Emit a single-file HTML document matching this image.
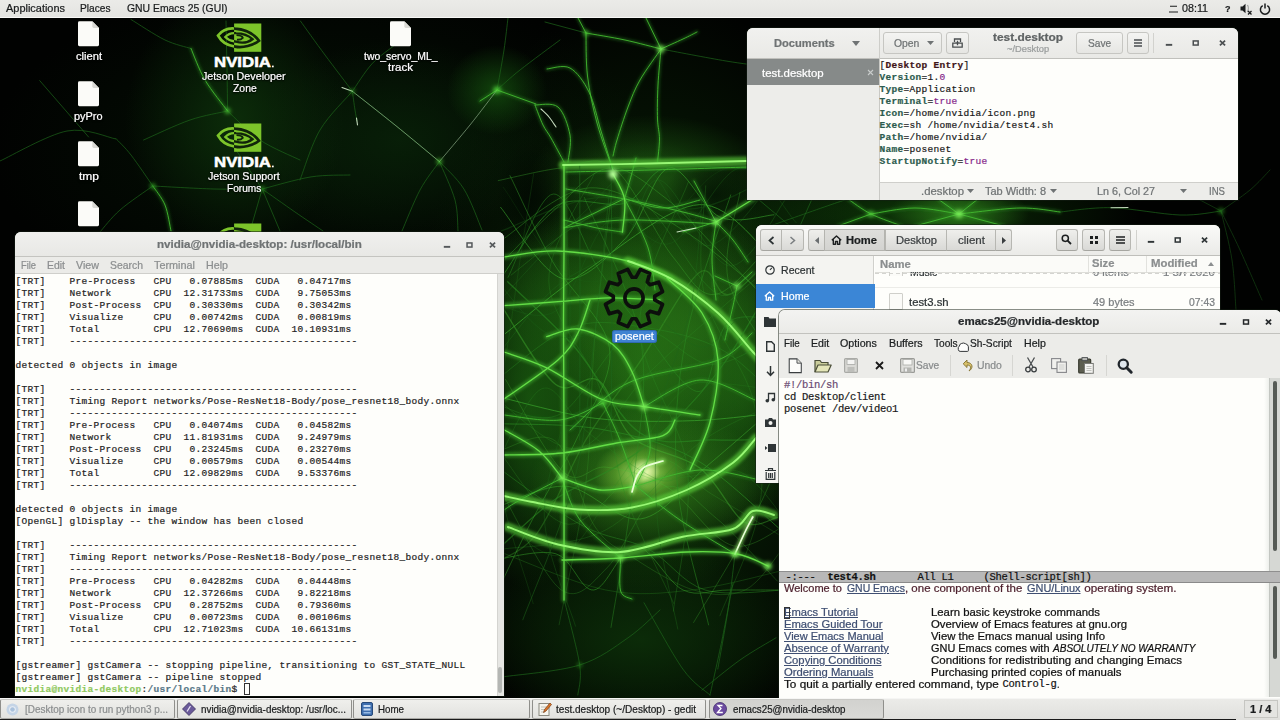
<!DOCTYPE html>
<html>
<head>
<meta charset="utf-8">
<title>desktop</title>
<style>
*{box-sizing:border-box;margin:0;padding:0}
html,body{width:1280px;height:720px;overflow:hidden;background:#000}
body{position:relative;font-family:"Liberation Sans",sans-serif;font-size:11px;color:#2e3436}
.abs{position:absolute}
.t{position:absolute;white-space:pre;transform-origin:0 50%;-webkit-text-stroke:.22px}
.mono{font-family:"Liberation Mono",monospace;font-size:9.5px;letter-spacing:0.299px;line-height:12px;white-space:pre;position:absolute;color:#1a1a1a;-webkit-text-stroke:.2px}
.mono b{font-weight:700}
svg{position:absolute;overflow:visible}
.mono.big{font-size:10.5px;letter-spacing:-0.301px}

</style>
</head>
<body>
<div class="abs" id="wall" style="left:0;top:0;width:1280px;height:720px;background:
radial-gradient(ellipse 50px 38px at 715px 195px, rgba(2,14,3,.75), rgba(2,14,3,0) 100%),
radial-gradient(ellipse 34px 60px at 530px 200px, rgba(1,8,2,.7), rgba(1,8,2,0) 100%),
radial-gradient(ellipse 15px 13px at 645px 471px, rgba(245,255,190,.95), rgba(220,250,140,0) 100%),
radial-gradient(ellipse 48px 34px at 642px 474px, rgba(200,245,120,.85), rgba(150,220,70,.35) 55%, rgba(120,200,60,0) 100%),
radial-gradient(ellipse 120px 70px at 650px 480px, rgba(70,160,36,.55), rgba(40,110,20,0) 100%),
radial-gradient(ellipse 110px 120px at 690px 330px, rgba(44,120,24,.55), rgba(30,90,16,0) 100%),
radial-gradient(ellipse 120px 60px at 650px 175px, rgba(40,120,24,.55), rgba(30,90,16,0) 100%),
radial-gradient(ellipse 70px 190px at 530px 400px, rgba(26,92,16,.75), rgba(20,70,12,0) 100%),
radial-gradient(ellipse 70px 150px at 745px 380px, rgba(30,100,18,.6), rgba(20,70,12,0) 100%),
radial-gradient(ellipse 130px 90px at 600px 300px, rgba(40,120,22,.5), rgba(30,90,16,0) 100%),
radial-gradient(ellipse 160px 230px at 645px 370px, rgba(34,104,18,.95), rgba(24,80,12,.6) 55%, rgba(14,50,8,0) 100%),
radial-gradient(ellipse 170px 90px at 640px 640px, rgba(12,46,9,.9), rgba(6,24,4,0) 100%),
radial-gradient(ellipse 240px 400px at 650px 390px, rgba(12,48,8,.95), rgba(6,24,4,0) 100%),
radial-gradient(ellipse 70px 30px at 959px 214px, rgba(50,140,30,.8), rgba(20,70,10,0) 100%),
radial-gradient(ellipse 240px 60px at 900px 214px, rgba(14,56,8,.9), rgba(8,30,4,0) 100%),
radial-gradient(ellipse 50px 45px at 497px 90px, rgba(20,80,14,.8), rgba(0,0,0,0) 100%),
radial-gradient(ellipse 110px 130px at 235px 120px, rgba(12,46,10,.95), rgba(0,0,0,0) 100%),
radial-gradient(ellipse 150px 100px at 400px 140px, rgba(8,32,8,.9), rgba(0,0,0,0) 100%),
radial-gradient(ellipse 330px 170px at 320px 150px, rgba(5,20,5,.9), rgba(0,0,0,0) 100%),
#010201"></div>
<svg width="1280" height="720" style="left:0;top:0" viewBox="0 0 1280 720"><defs><filter id="gl" x="-10%" y="-10%" width="120%" height="120%"><feGaussianBlur stdDeviation="1.600"/></filter><filter id="gn" x="-100%" y="-100%" width="300%" height="300%"><feGaussianBlur stdDeviation="2.200"/></filter></defs>
<g fill="none" stroke-linecap="round" stroke-linejoin="round">
<g filter="url(#gl)">
<path d="M646.0 18.0L661.0 49.0M661.0 49.0C664.7 47.3 677.0 41.8 683.0 39.0C689.0 36.2 694.7 33.2 697.0 32.0M586.0 33.0C592.5 34.2 612.5 37.3 625.0 40.0C637.5 42.7 655.0 47.5 661.0 49.0M661.0 49.0C660.5 55.0 658.6 73.3 658.0 85.0C657.4 96.7 657.2 110.0 657.5 119.0C657.8 128.0 659.5 131.8 659.5 139.0C659.5 146.2 657.8 158.2 657.5 162.0M661.0 49.0C657.5 54.2 645.5 70.3 640.0 80.0C634.5 89.7 631.8 97.0 628.0 107.0C624.2 117.0 619.5 131.8 617.0 140.0C614.5 148.2 613.7 153.3 613.0 156.0M578.0 18.0L586.0 33.0M586.0 33.0C586.2 40.2 585.7 61.0 587.5 76.0C589.3 91.0 592.8 107.3 597.0 123.0C601.2 138.7 610.3 162.2 613.0 170.0M547.0 69.0C550.8 68.8 563.0 64.2 570.0 68.0C577.0 71.8 583.8 81.5 589.0 92.0C594.2 102.5 597.0 118.0 601.0 131.0C605.0 144.0 611.0 163.5 613.0 170.0M535.0 105.0C536.3 108.3 540.3 119.5 543.0 125.0C545.7 130.5 547.5 131.8 551.0 138.0C554.5 144.2 561.8 158.0 564.0 162.0M535.0 105.0C538.8 105.3 552.2 102.0 558.0 107.0C563.8 112.0 568.3 125.8 570.0 135.0C571.7 144.2 568.3 157.5 568.0 162.0M480.0 101.0L497.0 90.0M497.0 90.0L536.0 104.0M566.0 172.0C580.0 171.7 619.7 170.8 650.0 170.0C680.3 169.2 731.7 167.5 748.0 167.0M636.0 158.0C635.0 161.7 631.9 173.2 630.0 180.0C628.1 186.8 625.4 195.8 624.5 199.0M566.0 189.0C575.8 190.7 605.0 195.2 624.5 199.0C644.0 202.8 667.4 208.2 683.0 212.0C698.6 215.8 712.2 220.3 718.0 222.0M564.0 220.0C569.5 221.3 587.2 226.0 597.0 228.0C606.8 230.0 618.2 231.3 622.5 232.0M716.0 222.0L683.0 232.0M716.0 222.0C718.8 225.0 727.7 233.3 733.0 240.0C738.3 246.7 745.5 258.3 748.0 262.0M694.0 181.0L716.0 222.0M716.0 222.0C715.3 228.2 712.0 246.0 712.0 259.0C712.0 272.0 715.3 293.2 716.0 300.0M752.0 272.0L737.0 286.0M737.0 286.0C736.3 289.3 735.0 297.0 733.0 306.0C731.0 315.0 726.3 334.3 725.0 340.0M715.0 276.0L737.0 286.0M564.0 227.8L624.5 198.6M624.5 198.6C630.9 200.2 650.4 207.8 663.0 208.0C675.6 208.2 693.8 201.3 700.0 200.0M624.5 198.6C628.4 206.7 642.7 231.8 647.8 247.0C652.9 262.2 653.8 282.8 655.0 290.0M564.0 227.8C574.1 226.5 598.9 220.6 624.5 220.0C650.1 219.4 702.2 223.3 717.8 224.0M570.0 430.0C579.7 422.2 603.3 394.7 628.0 383.0C652.7 371.3 697.3 368.3 718.0 360.0C738.7 351.7 746.3 337.5 752.0 333.0M603.0 403.0C595.8 405.8 576.5 418.0 560.0 420.0C543.5 422.0 513.3 415.8 504.0 415.0M603.0 403.0C605.8 409.2 614.5 426.2 620.0 440.0C625.5 453.8 633.3 478.3 636.0 486.0M644.0 406.7C653.3 402.2 681.5 381.1 700.0 380.0C718.5 378.9 745.8 396.7 755.0 400.0M644.0 406.7C645.0 413.9 651.3 436.8 650.0 450.0C648.7 463.2 638.3 480.0 636.0 486.0M620.6 558.0C620.6 563.5 618.7 584.2 620.6 591.0C622.5 597.8 630.1 597.7 632.0 599.0M562.0 478.0C565.0 485.0 570.2 506.7 580.0 520.0C589.8 533.3 613.8 551.7 620.6 558.0M636.0 486.0C643.3 491.7 663.5 508.7 680.0 520.0C696.5 531.3 725.8 548.3 735.0 554.0M636.0 486.0C646.7 483.3 679.3 471.0 700.0 470.0C720.7 469.0 750.0 478.3 760.0 480.0M562.0 478.0C555.0 481.7 529.7 494.7 520.0 500.0C510.3 505.3 506.7 508.3 504.0 510.0M191.0 48.5C193.3 53.8 198.9 69.6 205.0 80.0C211.1 90.4 223.8 105.8 227.6 111.0M152.8 186.0C154.8 189.2 162.0 197.5 165.0 205.0C168.0 212.5 170.0 226.7 171.0 231.0M915.0 226.0L959.0 214.0M959.0 214.0L978.0 199.0M938.0 199.0L959.0 214.0M959.0 214.0L1004.0 226.0M959.0 214.0C969.2 213.0 1003.2 208.3 1020.0 208.0C1036.8 207.7 1053.3 211.3 1060.0 212.0M848.0 199.0C851.8 201.5 862.0 209.5 871.0 214.0C880.0 218.5 896.8 224.0 902.0 226.0M871.0 214.0L838.0 226.0M871.0 214.0C878.3 213.0 900.3 208.0 915.0 208.0C929.7 208.0 951.7 213.0 959.0 214.0" stroke="#2f9a22" stroke-width="3.5" opacity="0.38"/>
<path d="M564.0 165.0C564.0 179.2 564.1 224.0 564.0 250.0C563.9 276.0 563.5 289.3 563.5 321.0C563.5 352.7 563.9 393.5 564.0 440.0C564.1 486.5 564.0 573.3 564.0 600.0M613.0 174.0C614.9 178.2 622.9 189.3 624.5 199.0C626.1 208.7 622.8 226.5 622.5 232.0M755.0 198.0L716.0 222.0M504.0 257.0C513.0 256.0 537.3 250.3 558.0 251.0C578.7 251.7 609.2 256.4 628.0 261.0C646.8 265.6 663.8 275.7 671.0 278.6M504.0 305.6C513.0 305.0 540.5 303.0 558.0 301.7C575.5 300.4 592.0 298.1 609.0 297.8C626.0 297.5 651.5 299.6 660.0 300.0M546.7 336.7C551.9 335.4 566.8 327.7 577.8 329.0C588.8 330.3 603.8 337.4 612.8 344.5C621.8 351.6 626.8 361.3 632.0 371.7C637.2 382.1 642.0 400.9 644.0 406.7M504.0 352.0C511.1 354.6 530.5 360.0 546.7 367.8C562.9 375.6 584.8 392.5 601.0 399.0C617.2 405.5 627.5 404.0 644.0 406.7C660.5 409.4 690.7 413.6 700.0 415.0M667.0 278.0C672.8 283.8 693.5 299.3 702.0 313.0C710.5 326.7 716.7 341.8 718.0 360.0C719.3 378.2 714.7 403.7 710.0 422.0C705.3 440.3 693.3 462.0 690.0 470.0M504.0 399.0C513.0 392.5 545.7 371.0 558.0 360.0C570.3 349.0 572.7 343.0 578.0 333.0C583.3 323.0 588.0 305.5 590.0 300.0M504.0 429.7C509.8 433.2 529.3 442.9 539.0 451.0C548.7 459.1 558.2 473.5 562.0 478.0M504.0 455.0C513.7 454.7 543.2 455.0 562.0 453.0C580.8 451.0 599.9 445.9 616.7 443.0C633.5 440.1 653.3 439.4 663.0 435.6C672.7 431.8 673.0 422.6 675.0 420.0M562.0 560.0C571.8 559.7 599.8 559.3 620.6 558.0C641.4 556.7 667.3 552.7 686.7 552.0C706.1 551.3 723.5 551.7 737.0 554.0C750.5 556.3 762.8 564.0 768.0 566.0M562.0 478.0C568.3 480.0 587.7 488.7 600.0 490.0C612.3 491.3 630.0 486.7 636.0 486.0" stroke="#46c032" stroke-width="5" opacity="0.5"/>
<path d="M563.0 165.0C577.5 164.8 619.5 164.2 650.0 163.5C680.5 162.8 730.0 161.4 746.0 161.0M628.0 261.0C635.2 263.9 656.0 269.9 671.0 278.6C686.0 287.3 704.3 300.8 718.0 313.0C731.7 325.2 743.0 340.8 753.0 352.0C763.0 363.2 773.8 375.3 778.0 380.0M504.0 496.0C508.5 496.9 518.7 499.4 531.0 501.7C543.3 503.9 561.2 508.5 578.0 509.5C594.8 510.5 613.9 510.8 632.0 507.5C650.1 504.2 669.9 497.4 686.7 490.0C703.5 482.6 721.5 471.5 733.0 462.8C744.5 454.1 752.2 442.1 756.0 438.0M507.8 527.0C516.2 529.9 539.2 540.3 558.0 544.5C576.8 548.7 599.8 553.3 620.6 552.0C641.4 550.7 664.1 540.5 682.8 536.7C701.5 532.9 721.3 533.3 733.0 529.0C744.7 524.7 746.0 513.3 752.8 511.0C759.6 508.7 770.5 514.3 774.0 515.0" stroke="#5fdc3c" stroke-width="9" opacity="0.6"/>
<path d="M735.0 554.0C736.7 550.3 742.0 538.2 745.0 532.0C748.0 525.8 751.5 519.5 752.8 517.0M632.0 492.0C632.8 489.3 634.8 480.2 637.0 476.0C639.2 471.8 640.7 469.2 645.0 466.7C649.3 464.2 660.0 461.9 663.0 461.0" stroke="#9cf070" stroke-width="5" opacity="0.6"/>
</g>
<path d="M497.5 302.9C511.1 288.6 554.5 239.6 579.0 217.1C603.5 194.6 623.2 163.2 644.5 168.0C665.8 172.8 683.8 245.8 706.9 245.8C730.0 245.8 770.3 181.0 783.0 168.0" stroke="#1d641a" stroke-width="0.8" opacity="0.48"/>
<path d="M501.9 549.2C519.3 546.0 573.6 547.2 606.4 529.6C639.2 512.0 670.3 464.5 698.6 443.5C726.9 422.4 763.5 410.2 776.5 403.5" stroke="#2a8a22" stroke-width="0.8" opacity="0.37"/>
<path d="M496.9 404.7C507.6 406.2 537.7 426.2 560.8 413.8C583.8 401.4 610.2 338.4 635.4 330.1C660.7 321.9 686.7 364.6 712.0 364.4C737.3 364.2 774.5 335.0 787.1 329.1" stroke="#2a8a22" stroke-width="1" opacity="0.36"/>
<path d="M500.6 207.3C510.9 219.2 541.7 273.4 562.5 278.6C583.3 283.8 607.8 256.8 625.5 238.3C643.3 219.9 653.3 171.6 669.0 168.0C684.7 164.4 702.2 209.1 719.6 216.9C737.1 224.7 764.9 215.1 773.9 214.8" stroke="#3aa82c" stroke-width="1" opacity="0.59"/>
<path d="M501.9 449.6C510.9 448.3 540.2 428.6 555.7 441.3C571.1 454.0 581.7 506.5 594.4 525.8C607.1 545.1 615.4 546.3 632.0 557.0C648.5 567.7 674.7 584.5 693.5 590.0C712.4 595.5 730.4 596.8 745.2 590.0C760.0 583.2 776.1 555.9 782.3 549.1" stroke="#4ac035" stroke-width="1" opacity="0.23"/>
<path d="M499.8 241.4C514.9 232.5 558.6 189.2 589.9 187.8C621.2 186.5 655.0 212.4 687.5 233.1C720.1 253.9 768.7 299.1 784.9 312.3" stroke="#3aa82c" stroke-width="1" opacity="0.41"/>
<path d="M505.0 498.6C514.4 513.8 544.3 578.6 561.4 590.0C578.5 601.4 590.7 584.3 607.5 567.3C624.4 550.3 644.5 496.2 662.6 488.1C680.8 479.9 697.2 502.7 716.3 518.2C735.4 533.7 767.2 570.6 777.4 581.1" stroke="#3aa82c" stroke-width="1" opacity="0.29"/>
<path d="M499.0 551.5C516.8 557.9 573.8 583.6 605.8 590.0C637.9 596.4 662.0 593.2 691.4 590.0C720.9 586.8 767.3 573.9 782.5 570.6" stroke="#2a8a22" stroke-width="0.8" opacity="0.41"/>
<path d="M491.9 563.9C499.4 558.9 521.0 554.4 536.8 533.6C552.6 512.7 569.6 467.0 586.6 438.6C603.7 410.2 620.5 390.5 639.2 362.9C658.0 335.2 684.0 284.1 699.0 272.7C714.0 261.3 715.3 298.6 729.1 294.4C742.8 290.2 772.6 255.2 781.3 247.3" stroke="#4ac035" stroke-width="1.3" opacity="0.28"/>
<path d="M490.1 364.8C500.6 352.2 531.3 309.2 553.2 289.2C575.2 269.1 604.2 262.6 621.9 244.5C639.6 226.3 641.8 176.6 659.6 180.1C677.4 183.7 707.6 262.7 728.7 265.8C749.8 268.9 776.5 209.9 786.0 198.7" stroke="#1d641a" stroke-width="1" opacity="0.47"/>
<path d="M496.5 379.8C509.2 371.0 547.4 335.8 572.2 327.1C597.1 318.4 621.0 323.9 645.8 327.6C670.5 331.3 698.7 337.4 720.7 349.1C742.7 360.9 768.2 390.0 777.7 398.2" stroke="#2a8a22" stroke-width="1" opacity="0.41"/>
<path d="M505.5 379.5C515.3 395.0 547.1 457.9 564.0 472.5C580.8 487.1 589.4 464.8 606.6 467.2C623.9 469.7 646.1 474.1 667.3 487.2C688.4 500.3 711.8 540.8 733.4 545.8C754.9 550.8 785.9 522.0 796.4 517.2" stroke="#4ac035" stroke-width="1" opacity="0.27"/>
<path d="M503.0 308.4C511.8 321.1 539.7 372.4 555.7 384.5C571.6 396.5 585.9 371.7 598.7 380.6C611.5 389.4 615.7 422.9 632.5 437.5C649.4 452.1 681.3 454.0 699.8 468.0C718.3 482.0 730.6 513.4 743.5 521.6C756.4 529.9 771.7 518.2 777.3 517.5" stroke="#4ac035" stroke-width="1.3" opacity="0.38"/>
<path d="M505.4 333.5C518.8 323.1 553.7 292.3 586.0 270.8C618.4 249.4 668.0 205.9 699.7 204.6C731.5 203.2 763.7 253.1 776.5 262.8" stroke="#3aa82c" stroke-width="1" opacity="0.69"/>
<path d="M488.5 391.7C503.2 401.2 550.0 451.7 576.7 448.6C603.3 445.5 623.7 397.1 648.5 373.1C673.3 349.1 701.2 325.7 725.4 304.6C749.7 283.5 782.5 256.3 794.0 246.6" stroke="#2a8a22" stroke-width="1" opacity="0.32"/>
<path d="M508.0 277.4C515.6 263.5 538.1 195.3 553.3 194.0C568.4 192.7 584.0 247.0 598.9 269.6C613.8 292.2 626.2 309.1 642.9 329.4C659.6 349.8 684.7 392.9 699.1 391.6C713.4 390.3 713.3 332.8 729.1 321.4C745.0 310.1 783.1 323.1 793.9 323.4" stroke="#2a8a22" stroke-width="1" opacity="0.51"/>
<path d="M501.4 230.9C517.0 225.4 562.9 201.6 595.4 197.9C628.0 194.1 665.0 213.4 696.8 208.4C728.7 203.4 771.5 174.7 786.4 168.0" stroke="#1d641a" stroke-width="1.3" opacity="0.35"/>
<path d="M498.6 396.9C514.7 400.4 562.5 414.3 595.1 418.3C627.8 422.2 662.8 421.7 694.6 420.6C726.4 419.5 770.6 413.0 785.8 411.5" stroke="#3aa82c" stroke-width="1" opacity="0.67"/>
<path d="M498.0 506.8C509.5 503.4 543.0 484.3 566.8 486.3C590.6 488.4 617.1 522.5 640.8 518.9C664.5 515.2 683.9 485.3 709.0 464.3C734.2 443.2 777.9 404.5 791.6 392.5" stroke="#3aa82c" stroke-width="1" opacity="0.53"/>
<path d="M511.2 275.0C523.0 266.1 560.3 233.8 582.1 221.7C603.9 209.6 618.9 190.1 642.2 202.4C665.5 214.7 698.2 290.7 721.7 295.4C745.3 300.2 773.1 241.8 783.4 231.1" stroke="#2a8a22" stroke-width="1" opacity="0.38"/>
<path d="M488.5 300.8C499.7 302.5 535.3 324.6 555.6 311.1C575.8 297.5 590.7 230.9 610.0 219.5C629.2 208.2 649.7 251.7 671.3 243.1C692.9 234.5 718.8 171.4 739.6 168.0C760.5 164.6 786.9 213.7 796.3 222.8" stroke="#1d641a" stroke-width="1" opacity="0.35"/>
<path d="M507.7 281.8C519.0 292.9 553.4 323.1 575.5 348.2C597.6 373.4 617.1 417.7 640.2 433.0C663.3 448.3 690.7 439.0 714.1 439.9C737.5 440.9 769.7 439.1 780.8 438.9" stroke="#2a8a22" stroke-width="1.3" opacity="0.60"/>
<path d="M510.5 528.6C519.5 532.9 545.6 563.1 564.2 554.2C582.9 545.3 603.3 502.0 622.5 475.1C641.8 448.2 662.8 407.9 679.7 392.8C696.6 377.6 704.9 383.8 724.1 384.0C743.4 384.2 783.4 392.4 795.2 394.0" stroke="#2a8a22" stroke-width="0.8" opacity="0.28"/>
<path d="M489.2 557.8C499.8 548.4 530.7 516.8 552.5 501.2C574.3 485.6 600.5 477.0 620.2 464.1C640.0 451.3 653.7 441.1 671.0 424.2C688.4 407.4 706.3 388.5 724.3 363.0C742.3 337.6 769.9 286.7 779.0 271.5" stroke="#2a8a22" stroke-width="1.3" opacity="0.57"/>
<path d="M490.6 272.0C499.8 282.1 527.1 322.7 545.9 332.6C564.6 342.6 586.9 335.2 603.0 331.7C619.2 328.1 626.2 308.8 642.7 311.4C659.1 313.9 684.4 346.1 701.6 347.0C718.7 348.0 731.0 315.6 745.5 317.2C759.9 318.7 781.1 349.9 788.3 356.4" stroke="#1d641a" stroke-width="1" opacity="0.39"/>
<path d="M498.3 180.6C508.8 178.5 541.7 170.1 561.0 168.0C580.3 165.9 595.4 153.1 614.1 168.0C632.9 182.9 656.2 236.5 673.4 257.5C690.5 278.5 699.4 297.9 717.1 294.1C734.8 290.2 769.1 244.3 779.5 234.3" stroke="#3aa82c" stroke-width="1" opacity="0.39"/>
<path d="M493.2 271.6C503.2 261.5 533.8 228.6 553.0 211.3C572.3 194.1 590.0 170.3 608.7 168.0C627.3 165.7 646.7 184.0 665.0 197.6C683.2 211.3 699.6 231.3 718.2 250.1C736.8 268.9 766.7 300.3 776.5 310.4" stroke="#3aa82c" stroke-width="1" opacity="0.41"/>
<path d="M502.1 423.7C518.5 424.6 568.8 423.4 601.0 429.3C633.2 435.2 665.0 442.2 695.2 459.2C725.4 476.2 767.8 519.2 782.3 531.2" stroke="#2a8a22" stroke-width="1" opacity="0.69"/>
<path d="M489.1 461.0C504.3 471.7 554.1 510.1 580.7 524.7C607.2 539.4 627.4 538.1 648.1 548.9C668.9 559.8 682.3 583.2 705.1 590.0C727.9 596.8 771.8 590.0 785.1 590.0" stroke="#2a8a22" stroke-width="0.8" opacity="0.61"/>
<path d="M503.3 187.3C514.1 201.9 546.9 261.6 568.3 274.6C589.7 287.6 607.3 282.2 631.7 265.4C656.1 248.6 689.9 190.2 714.5 174.0C739.1 157.7 768.5 169.0 779.3 168.0" stroke="#1d641a" stroke-width="0.8" opacity="0.25"/>
<path d="M494.1 469.6C502.0 456.1 526.2 394.9 541.9 388.7C557.5 382.5 569.3 417.4 587.9 432.3C606.6 447.1 637.4 470.4 653.9 477.8C670.5 485.3 672.5 477.6 687.2 476.7C701.8 475.8 725.1 464.9 741.9 472.7C758.7 480.5 780.2 515.0 787.8 523.4" stroke="#2a8a22" stroke-width="1" opacity="0.26"/>
<path d="M502.9 275.3C511.9 263.7 536.2 217.7 556.6 205.7C577.0 193.6 607.4 209.2 625.3 203.0C643.3 196.7 646.3 173.8 664.2 168.0C682.2 162.2 713.0 168.0 733.0 168.0C753.0 168.0 775.7 168.0 784.2 168.0" stroke="#2a8a22" stroke-width="1" opacity="0.70"/>
<path d="M488.4 561.4C499.5 560.1 537.6 548.8 555.2 553.6C572.7 558.3 580.4 591.3 593.8 590.0C607.2 588.7 620.7 546.0 635.5 546.0C650.4 546.0 667.5 582.7 683.1 590.0C698.6 597.3 710.1 590.0 728.9 590.0C747.7 590.0 784.7 590.0 795.9 590.0" stroke="#3aa82c" stroke-width="0.8" opacity="0.61"/>
<path d="M499.9 452.8C511.4 464.7 543.1 523.2 568.7 524.3C594.3 525.4 629.5 464.6 653.3 459.5C677.1 454.5 689.9 481.1 711.5 494.0C733.1 507.0 771.1 530.0 783.0 537.2" stroke="#3aa82c" stroke-width="0.8" opacity="0.28"/>
<path d="M594.4 173.5C586.8 191.4 547.9 245.2 548.8 281.0C549.7 316.9 587.2 352.7 600.0 388.5C612.7 424.4 613.2 460.2 625.5 496.0C637.8 531.9 665.7 585.6 673.7 603.5" stroke="#2a8a22" stroke-width="1" opacity="0.33"/>
<path d="M611.4 194.8C608.7 218.7 599.0 290.4 594.7 338.1C590.5 385.9 592.0 433.7 586.1 481.5C580.2 529.2 563.6 600.9 559.1 624.8" stroke="#3aa82c" stroke-width="1" opacity="0.24"/>
<path d="M584.3 197.4C593.7 221.3 632.6 293.0 640.8 340.8C648.9 388.5 638.1 436.3 633.1 484.1C628.2 531.9 614.7 603.5 611.0 627.4" stroke="#2a8a22" stroke-width="1" opacity="0.47"/>
<path d="M739.9 192.5C737.9 206.8 722.4 249.8 727.9 278.5C733.4 307.1 764.4 335.8 773.0 364.5C781.6 393.1 784.3 421.8 779.5 450.5C774.7 479.1 758.2 507.8 743.9 536.5C729.6 565.1 702.0 608.1 693.6 622.5" stroke="#3aa82c" stroke-width="1" opacity="0.34"/>
<path d="M705.7 185.8C705.4 203.7 696.0 257.4 704.0 293.3C711.9 329.1 744.2 364.9 753.4 400.8C762.6 436.6 765.0 472.4 759.4 508.3C753.8 544.1 726.5 597.9 719.9 615.8" stroke="#2a8a22" stroke-width="1" opacity="0.30"/>
<path d="M702.1 199.1C700.3 217.0 698.0 270.7 690.9 306.6C683.8 342.4 665.1 378.2 659.5 414.1C654.0 449.9 654.5 485.7 657.5 521.6C660.6 557.4 674.4 611.1 677.8 629.1" stroke="#1d641a" stroke-width="1" opacity="0.43"/>
<path d="M564.0 196.2C565.1 214.2 570.0 267.9 570.1 303.7C570.2 339.6 568.7 375.4 564.5 411.2C560.2 447.1 542.6 482.9 544.4 518.7C546.2 554.6 570.3 608.3 575.5 626.2" stroke="#1d641a" stroke-width="1" opacity="0.39"/>
<path d="M533.6 173.7C530.0 197.6 518.1 269.2 511.9 317.0C505.7 364.8 492.5 412.6 496.1 460.3C499.7 508.1 527.0 579.8 533.2 603.7" stroke="#2a8a22" stroke-width="1" opacity="0.21"/>
<path d="M609.5 189.8C607.1 213.7 600.5 285.4 594.8 333.2C589.1 380.9 587.3 428.7 575.3 476.5C563.4 524.3 531.6 595.9 522.8 619.8" stroke="#1d641a" stroke-width="1" opacity="0.54"/>
<path d="M688.6 181.2C680.4 205.1 639.9 276.7 639.7 324.5C639.5 372.3 681.7 420.1 687.3 467.8C692.9 515.6 675.7 587.3 673.4 611.2" stroke="#2a8a22" stroke-width="1" opacity="0.35"/>
<path d="M730.7 194.9C723.2 218.8 694.9 290.5 685.9 338.2C677.0 386.0 673.2 433.8 677.0 481.6C680.7 529.4 703.3 601.0 708.6 624.9" stroke="#2a8a22" stroke-width="1" opacity="0.54"/>
<path d="M510.0 175.7C517.2 190.0 536.1 233.0 552.7 261.7C569.3 290.3 605.0 319.0 609.4 347.7C613.8 376.3 592.0 405.0 579.2 433.7C566.3 462.3 547.0 491.0 532.3 519.7C517.5 548.3 497.7 591.3 490.8 605.7" stroke="#3aa82c" stroke-width="1" opacity="0.44"/>
<path d="M661.0 49.0C671.8 51.0 709.2 58.2 726.0 61.0C742.8 63.8 756.0 65.2 762.0 66.0M545.0 22.0L586.0 33.0M497.0 90.0C498.2 83.3 502.2 62.0 504.0 50.0C505.8 38.0 507.3 23.3 508.0 18.0M497.0 90.0C500.8 86.7 509.5 78.3 520.0 70.0C530.5 61.7 553.3 45.0 560.0 40.0M579.7 165.0C579.8 187.5 580.0 254.2 580.0 300.0C580.0 345.8 579.8 416.7 579.7 440.0M611.0 165.0C611.2 187.5 612.0 254.2 612.0 300.0C612.0 345.8 611.2 416.7 611.0 440.0M735.0 554.0C733.8 563.3 730.9 590.8 728.0 610.0C725.1 629.2 719.5 659.2 717.8 669.0M564.0 599.0C566.6 610.0 577.4 649.0 579.7 665.0C582.0 681.0 578.1 690.0 577.8 695.0M504.0 676.7C516.6 674.8 559.0 671.5 579.7 665.0C600.4 658.5 614.6 647.0 628.0 637.8C641.4 628.6 654.7 614.6 660.0 610.0M644.0 602.8C650.5 613.8 671.8 653.6 682.8 669.0C693.8 684.4 705.5 690.7 710.0 695.0M710.0 695.0C712.0 685.8 718.2 658.7 722.0 640.0C725.8 621.3 731.2 592.5 733.0 583.0M776.0 637.8C770.0 641.5 752.3 651.3 740.0 660.0C727.7 668.7 708.3 685.0 702.0 690.0M131.0 19.5C136.7 22.9 155.0 35.2 165.0 40.0C175.0 44.8 186.7 47.1 191.0 48.5M226.0 21.0C226.2 29.2 226.7 55.0 227.0 70.0C227.3 85.0 227.5 104.2 227.6 111.0M227.6 111.0C233.0 115.8 247.9 131.8 260.0 140.0C272.1 148.2 293.3 156.7 300.0 160.0M143.6 140.0C151.3 136.7 176.0 124.8 190.0 120.0C204.0 115.2 221.3 112.5 227.6 111.0M116.0 138.7C118.5 141.4 124.9 147.1 131.0 155.0C137.1 162.9 149.2 180.8 152.8 186.0M152.8 186.0C163.0 186.5 195.8 188.5 214.0 189.0C232.2 189.5 254.0 189.0 262.0 189.0M0.0 161.0C11.2 156.0 47.7 134.7 67.0 131.0C86.3 127.3 107.8 137.7 116.0 139.0M39.7 80.6L88.6 137.0M152.8 186.0C147.3 190.0 128.8 202.3 120.0 210.0C111.2 217.7 103.3 228.3 100.0 232.0M300.4 21.0C304.5 26.7 316.3 43.3 325.0 55.0C333.7 66.7 347.8 85.2 352.4 91.3M352.4 91.3C352.8 94.4 354.2 105.0 355.0 110.0C355.8 115.0 356.7 119.2 357.0 121.0M352.4 91.3C359.5 96.9 380.5 113.3 395.0 125.0C409.5 136.7 432.0 155.5 439.4 161.6M352.4 91.3C355.7 86.7 364.9 71.5 372.0 63.8C379.1 56.1 391.2 48.1 395.0 45.0M352.4 91.3C347.0 97.8 328.7 115.2 320.0 130.0C311.3 144.8 303.3 171.7 300.0 180.0M439.4 161.6C443.5 166.2 456.8 177.6 463.9 189.0C471.0 200.4 479.0 223.2 482.0 230.0M402.0 231.0C405.0 224.2 413.8 201.6 420.0 190.0C426.2 178.4 436.2 166.3 439.4 161.6M439.4 161.6C442.0 168.0 451.9 188.4 455.0 200.0C458.1 211.6 457.5 225.8 458.0 231.0M262.2 189.0C270.3 187.0 296.4 179.2 311.0 176.9C325.6 174.6 343.5 175.3 350.0 175.0M262.2 189.0C267.7 192.8 284.9 205.0 295.0 212.0C305.1 219.0 318.3 227.8 323.0 231.0M262.2 189.0L280.0 231.0M262.2 189.0L250.0 231.0M236.0 150.0L262.2 189.0M758.0 199.0L790.0 226.0M800.0 226.0L812.0 199.0M770.0 226.0C780.0 222.5 817.0 209.5 830.0 205.0C843.0 200.5 845.0 200.0 848.0 199.0M1060.0 212.0C1068.5 211.3 1091.0 207.2 1111.0 207.7C1131.0 208.2 1161.7 214.4 1180.0 215.0C1198.3 215.6 1214.2 211.7 1221.0 211.0" stroke="#1d641a" stroke-width="1.0" opacity="0.7"/>
<path d="M646.0 18.0L661.0 49.0M661.0 49.0C664.7 47.3 677.0 41.8 683.0 39.0C689.0 36.2 694.7 33.2 697.0 32.0M586.0 33.0C592.5 34.2 612.5 37.3 625.0 40.0C637.5 42.7 655.0 47.5 661.0 49.0M661.0 49.0C660.5 55.0 658.6 73.3 658.0 85.0C657.4 96.7 657.2 110.0 657.5 119.0C657.8 128.0 659.5 131.8 659.5 139.0C659.5 146.2 657.8 158.2 657.5 162.0M661.0 49.0C657.5 54.2 645.5 70.3 640.0 80.0C634.5 89.7 631.8 97.0 628.0 107.0C624.2 117.0 619.5 131.8 617.0 140.0C614.5 148.2 613.7 153.3 613.0 156.0M578.0 18.0L586.0 33.0M586.0 33.0C586.2 40.2 585.7 61.0 587.5 76.0C589.3 91.0 592.8 107.3 597.0 123.0C601.2 138.7 610.3 162.2 613.0 170.0M547.0 69.0C550.8 68.8 563.0 64.2 570.0 68.0C577.0 71.8 583.8 81.5 589.0 92.0C594.2 102.5 597.0 118.0 601.0 131.0C605.0 144.0 611.0 163.5 613.0 170.0M535.0 105.0C536.3 108.3 540.3 119.5 543.0 125.0C545.7 130.5 547.5 131.8 551.0 138.0C554.5 144.2 561.8 158.0 564.0 162.0M535.0 105.0C538.8 105.3 552.2 102.0 558.0 107.0C563.8 112.0 568.3 125.8 570.0 135.0C571.7 144.2 568.3 157.5 568.0 162.0M480.0 101.0L497.0 90.0M497.0 90.0L536.0 104.0M566.0 172.0C580.0 171.7 619.7 170.8 650.0 170.0C680.3 169.2 731.7 167.5 748.0 167.0M636.0 158.0C635.0 161.7 631.9 173.2 630.0 180.0C628.1 186.8 625.4 195.8 624.5 199.0M566.0 189.0C575.8 190.7 605.0 195.2 624.5 199.0C644.0 202.8 667.4 208.2 683.0 212.0C698.6 215.8 712.2 220.3 718.0 222.0M564.0 220.0C569.5 221.3 587.2 226.0 597.0 228.0C606.8 230.0 618.2 231.3 622.5 232.0M716.0 222.0L683.0 232.0M716.0 222.0C718.8 225.0 727.7 233.3 733.0 240.0C738.3 246.7 745.5 258.3 748.0 262.0M694.0 181.0L716.0 222.0M716.0 222.0C715.3 228.2 712.0 246.0 712.0 259.0C712.0 272.0 715.3 293.2 716.0 300.0M752.0 272.0L737.0 286.0M737.0 286.0C736.3 289.3 735.0 297.0 733.0 306.0C731.0 315.0 726.3 334.3 725.0 340.0M715.0 276.0L737.0 286.0M564.0 227.8L624.5 198.6M624.5 198.6C630.9 200.2 650.4 207.8 663.0 208.0C675.6 208.2 693.8 201.3 700.0 200.0M624.5 198.6C628.4 206.7 642.7 231.8 647.8 247.0C652.9 262.2 653.8 282.8 655.0 290.0M564.0 227.8C574.1 226.5 598.9 220.6 624.5 220.0C650.1 219.4 702.2 223.3 717.8 224.0M570.0 430.0C579.7 422.2 603.3 394.7 628.0 383.0C652.7 371.3 697.3 368.3 718.0 360.0C738.7 351.7 746.3 337.5 752.0 333.0M603.0 403.0C595.8 405.8 576.5 418.0 560.0 420.0C543.5 422.0 513.3 415.8 504.0 415.0M603.0 403.0C605.8 409.2 614.5 426.2 620.0 440.0C625.5 453.8 633.3 478.3 636.0 486.0M644.0 406.7C653.3 402.2 681.5 381.1 700.0 380.0C718.5 378.9 745.8 396.7 755.0 400.0M644.0 406.7C645.0 413.9 651.3 436.8 650.0 450.0C648.7 463.2 638.3 480.0 636.0 486.0M620.6 558.0C620.6 563.5 618.7 584.2 620.6 591.0C622.5 597.8 630.1 597.7 632.0 599.0M562.0 478.0C565.0 485.0 570.2 506.7 580.0 520.0C589.8 533.3 613.8 551.7 620.6 558.0M636.0 486.0C643.3 491.7 663.5 508.7 680.0 520.0C696.5 531.3 725.8 548.3 735.0 554.0M636.0 486.0C646.7 483.3 679.3 471.0 700.0 470.0C720.7 469.0 750.0 478.3 760.0 480.0M562.0 478.0C555.0 481.7 529.7 494.7 520.0 500.0C510.3 505.3 506.7 508.3 504.0 510.0M191.0 48.5C193.3 53.8 198.9 69.6 205.0 80.0C211.1 90.4 223.8 105.8 227.6 111.0M152.8 186.0C154.8 189.2 162.0 197.5 165.0 205.0C168.0 212.5 170.0 226.7 171.0 231.0M915.0 226.0L959.0 214.0M959.0 214.0L978.0 199.0M938.0 199.0L959.0 214.0M959.0 214.0L1004.0 226.0M959.0 214.0C969.2 213.0 1003.2 208.3 1020.0 208.0C1036.8 207.7 1053.3 211.3 1060.0 212.0M848.0 199.0C851.8 201.5 862.0 209.5 871.0 214.0C880.0 218.5 896.8 224.0 902.0 226.0M871.0 214.0L838.0 226.0M871.0 214.0C878.3 213.0 900.3 208.0 915.0 208.0C929.7 208.0 951.7 213.0 959.0 214.0" stroke="#43b830" stroke-width="1.0" opacity="0.9"/>
<path d="M564.0 165.0C564.0 179.2 564.1 224.0 564.0 250.0C563.9 276.0 563.5 289.3 563.5 321.0C563.5 352.7 563.9 393.5 564.0 440.0C564.1 486.5 564.0 573.3 564.0 600.0M613.0 174.0C614.9 178.2 622.9 189.3 624.5 199.0C626.1 208.7 622.8 226.5 622.5 232.0M755.0 198.0L716.0 222.0M504.0 257.0C513.0 256.0 537.3 250.3 558.0 251.0C578.7 251.7 609.2 256.4 628.0 261.0C646.8 265.6 663.8 275.7 671.0 278.6M504.0 305.6C513.0 305.0 540.5 303.0 558.0 301.7C575.5 300.4 592.0 298.1 609.0 297.8C626.0 297.5 651.5 299.6 660.0 300.0M546.7 336.7C551.9 335.4 566.8 327.7 577.8 329.0C588.8 330.3 603.8 337.4 612.8 344.5C621.8 351.6 626.8 361.3 632.0 371.7C637.2 382.1 642.0 400.9 644.0 406.7M504.0 352.0C511.1 354.6 530.5 360.0 546.7 367.8C562.9 375.6 584.8 392.5 601.0 399.0C617.2 405.5 627.5 404.0 644.0 406.7C660.5 409.4 690.7 413.6 700.0 415.0M667.0 278.0C672.8 283.8 693.5 299.3 702.0 313.0C710.5 326.7 716.7 341.8 718.0 360.0C719.3 378.2 714.7 403.7 710.0 422.0C705.3 440.3 693.3 462.0 690.0 470.0M504.0 399.0C513.0 392.5 545.7 371.0 558.0 360.0C570.3 349.0 572.7 343.0 578.0 333.0C583.3 323.0 588.0 305.5 590.0 300.0M504.0 429.7C509.8 433.2 529.3 442.9 539.0 451.0C548.7 459.1 558.2 473.5 562.0 478.0M504.0 455.0C513.7 454.7 543.2 455.0 562.0 453.0C580.8 451.0 599.9 445.9 616.7 443.0C633.5 440.1 653.3 439.4 663.0 435.6C672.7 431.8 673.0 422.6 675.0 420.0M562.0 560.0C571.8 559.7 599.8 559.3 620.6 558.0C641.4 556.7 667.3 552.7 686.7 552.0C706.1 551.3 723.5 551.7 737.0 554.0C750.5 556.3 762.8 564.0 768.0 566.0M562.0 478.0C568.3 480.0 587.7 488.7 600.0 490.0C612.3 491.3 630.0 486.7 636.0 486.0" stroke="#66e248" stroke-width="1.3" opacity="0.95"/>
<path d="M563.0 165.0C577.5 164.8 619.5 164.2 650.0 163.5C680.5 162.8 730.0 161.4 746.0 161.0M628.0 261.0C635.2 263.9 656.0 269.9 671.0 278.6C686.0 287.3 704.3 300.8 718.0 313.0C731.7 325.2 743.0 340.8 753.0 352.0C763.0 363.2 773.8 375.3 778.0 380.0M504.0 496.0C508.5 496.9 518.7 499.4 531.0 501.7C543.3 503.9 561.2 508.5 578.0 509.5C594.8 510.5 613.9 510.8 632.0 507.5C650.1 504.2 669.9 497.4 686.7 490.0C703.5 482.6 721.5 471.5 733.0 462.8C744.5 454.1 752.2 442.1 756.0 438.0M507.8 527.0C516.2 529.9 539.2 540.3 558.0 544.5C576.8 548.7 599.8 553.3 620.6 552.0C641.4 550.7 664.1 540.5 682.8 536.7C701.5 532.9 721.3 533.3 733.0 529.0C744.7 524.7 746.0 513.3 752.8 511.0C759.6 508.7 770.5 514.3 774.0 515.0" stroke="#98f874" stroke-width="1.9" opacity="1"/>
<path d="M735.0 554.0C736.7 550.3 742.0 538.2 745.0 532.0C748.0 525.8 751.5 519.5 752.8 517.0M632.0 492.0C632.8 489.3 634.8 480.2 637.0 476.0C639.2 471.8 640.7 469.2 645.0 466.7C649.3 464.2 660.0 461.9 663.0 461.0" stroke="#eaffd8" stroke-width="1.7" opacity="1"/>
<path d="M439.4 161.6C444.5 155.5 460.4 136.9 470.0 125.0C479.6 113.1 492.5 95.8 497.0 90.0M352.4 91.3C359.5 96.9 380.5 113.3 395.0 125.0C409.5 136.7 432.0 155.5 439.4 161.6" stroke="#8fae8a" stroke-width="0.9" opacity="0.75"/>
<path d="M1221.0 211.0C1224.2 217.5 1233.2 235.2 1240.0 250.0C1246.8 264.8 1258.3 291.7 1262.0 300.0M1221.0 211.0C1225.8 207.5 1241.8 196.8 1250.0 190.0C1258.2 183.2 1266.7 173.3 1270.0 170.0M1200.0 200.0L1221.0 211.0M1221.0 211.0C1222.8 219.2 1229.5 243.5 1232.0 260.0C1234.5 276.5 1235.3 301.7 1236.0 310.0" stroke="#123a10" stroke-width="1" opacity="0.8"/>
<path d="M541.0 109.0C542.3 110.3 546.5 114.0 549.0 117.0C551.5 120.0 554.8 125.3 556.0 127.0M677.0 232.0L696.0 228.0M342.0 87.5L352.4 91.3M356.5 118.0L357.5 125.0M1111.0 207.7L1128.0 207.5" stroke="#d8efd0" stroke-width="1.1" opacity="0.9"/>
</g>
<g filter="url(#gn)">
<circle cx="661" cy="49" r="3.5" fill="#7af058"/>
<circle cx="586" cy="33" r="2.5" fill="#4fd038"/>
<circle cx="497" cy="90" r="3.5" fill="#4fd038"/>
<circle cx="613" cy="174" r="4.5" fill="#b6ff98"/>
<circle cx="716" cy="222" r="3.5" fill="#7af058"/>
<circle cx="737" cy="286" r="3" fill="#7af058"/>
<circle cx="644" cy="406.7" r="3.5" fill="#7af058"/>
<circle cx="603" cy="403" r="3" fill="#4fd038"/>
<circle cx="562" cy="478" r="3.5" fill="#7af058"/>
<circle cx="620.6" cy="558" r="3" fill="#7af058"/>
<circle cx="735" cy="554" r="3.5" fill="#7af058"/>
<circle cx="768" cy="566" r="3.5" fill="#7af058"/>
<circle cx="579.7" cy="665" r="2" fill="#2f9a22"/>
<circle cx="227.6" cy="111" r="2.5" fill="#4fd038"/>
<circle cx="152.8" cy="186" r="2.5" fill="#2f9a22"/>
<circle cx="352.4" cy="91.3" r="2.2" fill="#2f9a22"/>
<circle cx="439.4" cy="161.6" r="2.5" fill="#4fd038"/>
<circle cx="262.2" cy="189" r="2.5" fill="#2f9a22"/>
<circle cx="959" cy="214" r="4" fill="#7af058"/>
<circle cx="871" cy="214" r="3" fill="#4fd038"/>
<circle cx="1221" cy="211" r="2.5" fill="#2f9a22"/>
</g></svg>
<svg width="21" height="27.5" style="left:77.8px;top:19.5px" viewBox="0 0 22 26"><path d="M1.5 0H15L22 7V24.5Q22 26 20.5 26H1.5Q0 26 0 24.5V1.5Q0 0 1.5 0Z" fill="#fbfbf8"/><path d="M15 0V5.5Q15 7 16.5 7H22Z" fill="#d9d9d4"/></svg>
<span class="t" style="left:75.80px;top:51px;font-size:10.3px;line-height:12px;color:#ffffff;transform:scaleX(1.0854);text-shadow:0 1px 2px #000,0 0 2px #000;">client</span>
<svg width="21" height="27.5" style="left:77.8px;top:79.8px" viewBox="0 0 22 26"><path d="M1.5 0H15L22 7V24.5Q22 26 20.5 26H1.5Q0 26 0 24.5V1.5Q0 0 1.5 0Z" fill="#fbfbf8"/><path d="M15 0V5.5Q15 7 16.5 7H22Z" fill="#d9d9d4"/></svg>
<span class="t" style="left:74.25px;top:111px;font-size:10.3px;line-height:12px;color:#ffffff;transform:scaleX(1.0592);text-shadow:0 1px 2px #000,0 0 2px #000;">pyPro</span>
<svg width="21" height="27.5" style="left:77.8px;top:140px" viewBox="0 0 22 26"><path d="M1.5 0H15L22 7V24.5Q22 26 20.5 26H1.5Q0 26 0 24.5V1.5Q0 0 1.5 0Z" fill="#fbfbf8"/><path d="M15 0V5.5Q15 7 16.5 7H22Z" fill="#d9d9d4"/></svg>
<span class="t" style="left:78.50px;top:171px;font-size:10.3px;line-height:12px;color:#ffffff;transform:scaleX(1.1647);text-shadow:0 1px 2px #000,0 0 2px #000;">tmp</span>
<svg width="21" height="27.5" style="left:77.8px;top:200.2px" viewBox="0 0 22 26"><path d="M1.5 0H15L22 7V24.5Q22 26 20.5 26H1.5Q0 26 0 24.5V1.5Q0 0 1.5 0Z" fill="#fbfbf8"/><path d="M15 0V5.5Q15 7 16.5 7H22Z" fill="#d9d9d4"/></svg>
<svg width="21" height="27.5" style="left:390.0px;top:19.5px" viewBox="0 0 22 26"><path d="M1.5 0H15L22 7V24.5Q22 26 20.5 26H1.5Q0 26 0 24.5V1.5Q0 0 1.5 0Z" fill="#fbfbf8"/><path d="M15 0V5.5Q15 7 16.5 7H22Z" fill="#d9d9d4"/></svg>
<span class="t" style="left:363.85px;top:51px;font-size:10.3px;line-height:12px;color:#ffffff;transform:scaleX(1.0112);text-shadow:0 1px 2px #000,0 0 2px #000;">two_servo_ML_</span>
<span class="t" style="left:387.90px;top:62px;font-size:10.3px;line-height:12px;color:#ffffff;transform:scaleX(1.1197);text-shadow:0 1px 2px #000,0 0 2px #000;">track</span>
<svg width="62" height="46" style="left:213px;top:22.9px" viewBox="0 0 62 46">
<defs><clipPath id="cl1"><rect x="0" y="0" width="21.1" height="30"/></clipPath><clipPath id="cr1"><rect x="21.1" y="0" width="30" height="30"/></clipPath></defs>
<rect x="21.100" y="0.500" width="27.200" height="28.300" fill="#7cc42a"/>
<g fill="none" clip-path="url(#cl1)" stroke="#7cc42a"><path d="M5 12.500C9 7.500 15 4.800 22 5.600C32 6.200 41 11 46 17.800C40 22.500 30 25.200 22 23.600C14 22.500 8 18 5 12.500Z" stroke-width="2.700"/><path d="M12.300 14C15 11 19 9.800 23 10.200C30 10.500 36 13 39.500 16.200C35 19.500 29 20.600 23 18.600C18 18 14.500 16.500 12.300 14Z" stroke-width="2.300"/></g>
<g fill="none" clip-path="url(#cr1)" stroke="#10240a"><path d="M5 12.500C9 7.500 15 4.800 22 5.600C32 6.200 41 11 46 17.800C40 22.500 30 25.200 22 23.600C14 22.500 8 18 5 12.500Z" stroke-width="2.700"/><path d="M12.300 14C15 11 19 9.800 23 10.200C30 10.500 36 13 39.500 16.200C35 19.500 29 20.600 23 18.600C18 18 14.500 16.500 12.300 14Z" stroke-width="2.300"/><path d="M23.500 12.200C27 12.300 29.200 13.300 29.800 14.800C28.500 16.300 26.500 16.900 24 16.700" stroke-width="1.800"/></g>
<text x="1" y="44.200" font-family="Liberation Sans" font-weight="700" font-size="13.800" fill="#fff" stroke="#fff" stroke-width=".5" textLength="57" lengthAdjust="spacingAndGlyphs">NVIDIA</text>
<rect x="59" y="42.600" width="1.700" height="1.700" fill="#fff"/>
</svg>
<span class="t" style="left:202.15px;top:71px;font-size:10.3px;line-height:12px;color:#ffffff;transform:scaleX(1.0419);text-shadow:0 1px 2px #000,0 0 2px #000;">Jetson Developer</span>
<span class="t" style="left:232.55px;top:83px;font-size:10.3px;line-height:12px;color:#ffffff;transform:scaleX(1.0092);text-shadow:0 1px 2px #000,0 0 2px #000;">Zone</span>
<svg width="62" height="46" style="left:213px;top:122.7px" viewBox="0 0 62 46">
<defs><clipPath id="cl2"><rect x="0" y="0" width="21.1" height="30"/></clipPath><clipPath id="cr2"><rect x="21.1" y="0" width="30" height="30"/></clipPath></defs>
<rect x="21.100" y="0.500" width="27.200" height="28.300" fill="#7cc42a"/>
<g fill="none" clip-path="url(#cl2)" stroke="#7cc42a"><path d="M5 12.500C9 7.500 15 4.800 22 5.600C32 6.200 41 11 46 17.800C40 22.500 30 25.200 22 23.600C14 22.500 8 18 5 12.500Z" stroke-width="2.700"/><path d="M12.300 14C15 11 19 9.800 23 10.200C30 10.500 36 13 39.500 16.200C35 19.500 29 20.600 23 18.600C18 18 14.500 16.500 12.300 14Z" stroke-width="2.300"/></g>
<g fill="none" clip-path="url(#cr2)" stroke="#10240a"><path d="M5 12.500C9 7.500 15 4.800 22 5.600C32 6.200 41 11 46 17.800C40 22.500 30 25.200 22 23.600C14 22.500 8 18 5 12.500Z" stroke-width="2.700"/><path d="M12.300 14C15 11 19 9.800 23 10.200C30 10.500 36 13 39.500 16.200C35 19.500 29 20.600 23 18.600C18 18 14.500 16.500 12.300 14Z" stroke-width="2.300"/><path d="M23.500 12.200C27 12.300 29.200 13.300 29.800 14.800C28.500 16.300 26.500 16.900 24 16.700" stroke-width="1.800"/></g>
<text x="1" y="44.200" font-family="Liberation Sans" font-weight="700" font-size="13.800" fill="#fff" stroke="#fff" stroke-width=".5" textLength="57" lengthAdjust="spacingAndGlyphs">NVIDIA</text>
<rect x="59" y="42.600" width="1.700" height="1.700" fill="#fff"/>
</svg>
<span class="t" style="left:208.15px;top:171px;font-size:10.3px;line-height:12px;color:#ffffff;transform:scaleX(1.0351);text-shadow:0 1px 2px #000,0 0 2px #000;">Jetson Support</span>
<span class="t" style="left:226.85px;top:183px;font-size:10.3px;line-height:12px;color:#ffffff;transform:scaleX(0.9826);text-shadow:0 1px 2px #000,0 0 2px #000;">Forums</span>
<svg width="62" height="46" style="left:213px;top:222.5px" viewBox="0 0 62 46">
<defs><clipPath id="cl3"><rect x="0" y="0" width="21.1" height="30"/></clipPath><clipPath id="cr3"><rect x="21.1" y="0" width="30" height="30"/></clipPath></defs>
<rect x="21.100" y="0.500" width="27.200" height="28.300" fill="#7cc42a"/>
<g fill="none" clip-path="url(#cl3)" stroke="#7cc42a"><path d="M5 12.500C9 7.500 15 4.800 22 5.600C32 6.200 41 11 46 17.800C40 22.500 30 25.200 22 23.600C14 22.500 8 18 5 12.500Z" stroke-width="2.700"/><path d="M12.300 14C15 11 19 9.800 23 10.200C30 10.500 36 13 39.500 16.200C35 19.500 29 20.600 23 18.600C18 18 14.500 16.500 12.300 14Z" stroke-width="2.300"/></g>
<g fill="none" clip-path="url(#cr3)" stroke="#10240a"><path d="M5 12.500C9 7.500 15 4.800 22 5.600C32 6.200 41 11 46 17.800C40 22.500 30 25.200 22 23.600C14 22.500 8 18 5 12.500Z" stroke-width="2.700"/><path d="M12.300 14C15 11 19 9.800 23 10.200C30 10.500 36 13 39.500 16.200C35 19.500 29 20.600 23 18.600C18 18 14.500 16.500 12.300 14Z" stroke-width="2.300"/><path d="M23.500 12.200C27 12.300 29.200 13.300 29.800 14.800C28.500 16.300 26.500 16.900 24 16.700" stroke-width="1.800"/></g>
<text x="1" y="44.200" font-family="Liberation Sans" font-weight="700" font-size="13.800" fill="#fff" stroke="#fff" stroke-width=".5" textLength="57" lengthAdjust="spacingAndGlyphs">NVIDIA</text>
<rect x="59" y="42.600" width="1.700" height="1.700" fill="#fff"/>
</svg>
<svg width="70" height="70" style="left:599px;top:263px" viewBox="-35 -35 70 70">
<g fill="none" stroke="#0c0f0c" stroke-width="3.600" stroke-linejoin="round">
<path d="M1.9 -20.7L6.3 -28.6L15.8 -24.7L13.3 -16.0L16.0 -13.3L24.7 -15.8L28.6 -6.3L20.7 -1.9L20.7 1.9L28.6 6.3L24.7 15.8L16.0 13.3L13.3 16.0L15.8 24.7L6.3 28.6L1.9 20.7L-1.9 20.7L-6.3 28.6L-15.8 24.7L-13.3 16.0L-16.0 13.3L-24.7 15.8L-28.6 6.3L-20.7 1.9L-20.7 -1.9L-28.6 -6.3L-24.7 -15.8L-16.0 -13.3L-13.3 -16.0L-15.8 -24.7L-6.3 -28.6L-1.9 -20.7Z"/>
<circle r="9.100"/>
</g></svg>
<div class="abs" style="left:612.3px;top:330px;width:44.5px;height:13.2px;background:#3f83d2;border-radius:3px;box-shadow:inset 0 0 0 1px rgba(20,60,120,.35)"></div>
<span class="t" style="left:615.20px;top:331px;font-size:10.3px;line-height:12px;color:#fff;transform:scaleX(1.0585);">posenet</span>
<div class="abs" style="left:15px;top:232px;width:489px;height:464px;background:#fefefb;border-radius:6px 6px 0 0;box-shadow:0 0 0 1px rgba(20,30,20,.55)"></div>
<div class="abs" style="left:15px;top:232px;width:489px;height:24.5px;background:linear-gradient(#f0f0ee,#e8e8e5);border-radius:6px 6px 0 0;border-bottom:1px solid #c4c4c0"></div>
<div class="abs" style="left:15px;top:256.5px;width:489px;height:17px;background:#ebebe8;border-bottom:1px solid #cfcfcb"></div>
<span class="t" style="left:156.90px;top:239px;font-size:10.3px;line-height:12px;color:#6f7374;font-weight:700;transform:scaleX(1.1239);">nvidia@nvidia-desktop: /usr/local/bin</span>
<svg width="57.5" height="12" style="left:440.5px;top:238.5px" viewBox="440.5 238.5 57.5 12"><rect x="443.3" y="245.4" width="6.400" height="1.900" fill="#55595b"/><rect x="466.55" y="242.45" width="4.900" height="4.100" fill="none" stroke="#55595b" stroke-width="1.500"/><path d="M489.4 242.1L494.6 246.9M494.6 242.1L489.4 246.9" stroke="#55595b" stroke-width="1.700" fill="none"/></svg>
<span class="t" style="left:20.50px;top:260px;font-size:10.3px;line-height:12px;color:#8b8e8f;transform:scaleX(0.9040);">File</span>
<span class="t" style="left:47.00px;top:260px;font-size:10.3px;line-height:12px;color:#8b8e8f;transform:scaleX(1.0141);">Edit</span>
<span class="t" style="left:76.00px;top:260px;font-size:10.3px;line-height:12px;color:#8b8e8f;transform:scaleX(1.0388);">View</span>
<span class="t" style="left:110.00px;top:260px;font-size:10.3px;line-height:12px;color:#8b8e8f;transform:scaleX(1.0110);">Search</span>
<span class="t" style="left:154.00px;top:260px;font-size:10.3px;line-height:12px;color:#8b8e8f;transform:scaleX(1.0534);">Terminal</span>
<span class="t" style="left:206.00px;top:260px;font-size:10.3px;line-height:12px;color:#8b8e8f;transform:scaleX(1.0383);">Help</span>
<div class="abs" style="left:496.5px;top:273.5px;width:7.5px;height:422px;background:#e6e6e3;border-left:1px solid #d4d4d0"></div>
<div class="abs" style="left:498.3px;top:667px;width:3.4px;height:25.5px;background:#b4b6b3;border-radius:2px"></div>
<div class="mono" style="left:15.5px;top:276px;color:#232323">[TRT]    Pre-Process   CPU   0.07885ms  CUDA   0.04717ms
[TRT]    Network       CPU  12.31733ms  CUDA   9.75053ms
[TRT]    Post-Process  CPU   0.30330ms  CUDA   0.30342ms
[TRT]    Visualize     CPU   0.00742ms  CUDA   0.00819ms
[TRT]    Total         CPU  12.70690ms  CUDA  10.10931ms
[TRT]    ------------------------------------------------

detected 0 objects in image

[TRT]    ------------------------------------------------
[TRT]    Timing Report networks/Pose-ResNet18-Body/pose_resnet18_body.onnx
[TRT]    ------------------------------------------------
[TRT]    Pre-Process   CPU   0.04074ms  CUDA   0.04582ms
[TRT]    Network       CPU  11.81931ms  CUDA   9.24979ms
[TRT]    Post-Process  CPU   0.23245ms  CUDA   0.23270ms
[TRT]    Visualize     CPU   0.00579ms  CUDA   0.00544ms
[TRT]    Total         CPU  12.09829ms  CUDA   9.53376ms
[TRT]    ------------------------------------------------

detected 0 objects in image
[OpenGL] glDisplay -- the window has been closed

[TRT]    ------------------------------------------------
[TRT]    Timing Report networks/Pose-ResNet18-Body/pose_resnet18_body.onnx
[TRT]    ------------------------------------------------
[TRT]    Pre-Process   CPU   0.04282ms  CUDA   0.04448ms
[TRT]    Network       CPU  12.37266ms  CUDA   9.82218ms
[TRT]    Post-Process  CPU   0.28752ms  CUDA   0.79360ms
[TRT]    Visualize     CPU   0.00723ms  CUDA   0.00106ms
[TRT]    Total         CPU  12.71023ms  CUDA  10.66131ms
[TRT]    ------------------------------------------------

[gstreamer] gstCamera -- stopping pipeline, transitioning to GST_STATE_NULL
[gstreamer] gstCamera -- pipeline stopped
<b style="color:#8fc960">nvidia@nvidia-desktop</b>:<b style="color:#587888">/usr/local/bin</b>$ </div>
<div class="abs" style="left:243.5px;top:683px;width:6px;height:11.5px;border:1px solid #333"></div>
<div class="abs" style="left:747px;top:27.5px;width:491px;height:172.5px;background:#ededea;border-radius:6px 6px 0 0;box-shadow:0 0 0 1px rgba(20,30,20,.55)"></div>
<div class="abs" style="left:747px;top:27.5px;width:491px;height:31px;background:linear-gradient(#f1f1ef,#e9e9e6);border-radius:6px 6px 0 0;border-bottom:1px solid #c0c0bc"></div>
<div class="abs" style="left:879px;top:58.5px;width:359px;height:123.5px;background:#fefefb;border-left:1px solid #c9c9c5"></div>
<div class="abs" style="left:878.5px;top:27.5px;width:1px;height:31px;background:#cdcdc9"></div>
<div class="abs" style="left:747px;top:58.5px;width:131.5px;height:26px;background:#868a89"></div>
<span class="t" style="left:761.50px;top:68px;font-size:10.3px;line-height:12px;color:#ffffff;transform:scaleX(1.1093);">test.desktop</span>
<svg width="7" height="7" style="left:866.5px;top:68.5px" viewBox="0 0 7 7"><path d="M1 1L6 6M6 1L1 6" stroke="#c9cccb" stroke-width="1.100" fill="none"/></svg>
<span class="t" style="left:774.40px;top:38px;font-size:10.3px;line-height:12px;color:#6f7374;font-weight:700;transform:scaleX(1.0806);">Documents</span>
<svg width="8" height="5" style="left:852px;top:41px" viewBox="0 0 8 5"><path d="M0 0H8L4 5Z" fill="#6f7374"/></svg>
<div class="abs" style="left:883px;top:32px;width:58.5px;height:21.5px;border:1px solid #c6c6c2;border-radius:3px;background:linear-gradient(#f4f4f2,#e6e6e3)"></div>
<span class="t" style="left:894.40px;top:38px;font-size:10.3px;line-height:12px;color:#6f7374;transform:scaleX(1.0078);">Open</span>
<svg width="7" height="4" style="left:926.5px;top:41px" viewBox="0 0 7 4"><path d="M0 0H7L3.500 4Z" fill="#6f7374"/></svg>
<div class="abs" style="left:946px;top:32px;width:22.5px;height:21.5px;border:1px solid #c6c6c2;border-radius:3px;background:linear-gradient(#f4f4f2,#e6e6e3)"></div>
<svg width="11" height="10" style="left:951.5px;top:37.5px" viewBox="0 0 11 10"><path d="M2.500 4V1H8.500V4M0.800 9.200V5.200H10.200V9.200ZM5.500 2.800V7.200M3.500 5H7.500" stroke="#4a4e50" stroke-width="1.300" fill="none"/></svg>
<span class="t" style="left:992.80px;top:32px;font-size:10.3px;line-height:12px;color:#5f6364;font-weight:700;transform:scaleX(1.1540);">test.desktop</span>
<span class="t" style="left:1006.90px;top:43px;font-size:8.61px;line-height:12px;color:#9a9d9d;transform:scaleX(1.0812);">~/Desktop</span>
<div class="abs" style="left:1076px;top:32px;width:46.5px;height:21.5px;border:1px solid #c6c6c2;border-radius:3px;background:linear-gradient(#f4f4f2,#e6e6e3)"></div>
<span class="t" style="left:1087.70px;top:38px;font-size:10.3px;line-height:12px;color:#6f7374;transform:scaleX(0.9879);">Save</span>
<div class="abs" style="left:1126.5px;top:32px;width:22.5px;height:21.5px;border:1px solid #c6c6c2;border-radius:3px;background:linear-gradient(#f4f4f2,#e6e6e3)"></div>
<svg width="8" height="8" style="left:1134px;top:38.500px" viewBox="0 0 8 8"><path d="M0 1H8M0 4H8M0 7H8" stroke="#4a4e50" stroke-width="1.400"/></svg>
<div class="abs" style="left:1153px;top:33px;width:1px;height:20px;background:#d2d2ce"></div>
<svg width="65.5" height="12" style="left:1163.3px;top:36.8px" viewBox="1163.3 36.8 65.5 12"><rect x="1166.1" y="43.699999999999996" width="6.400" height="1.900" fill="#4a4e50"/><rect x="1193.55" y="40.75" width="4.900" height="4.100" fill="none" stroke="#4a4e50" stroke-width="1.500"/><path d="M1220.2 40.4L1225.3999999999999 45.199999999999996M1225.3999999999999 40.4L1220.2 45.199999999999996" stroke="#4a4e50" stroke-width="1.700" fill="none"/></svg>
<div class="mono" style="left:879.5px;top:59.5px;color:#1a1a1a">[<b style="color:#401418">Desktop Entry</b>]
<b style="color:#2c5c4e">Version</b>=1.<span style="color:#85278a">0</span>
<b style="color:#2c5c4e">Type</b>=Application
<b style="color:#2c5c4e">Terminal</b>=<span style="color:#85278a">true</span>
<b style="color:#2c5c4e">Icon</b>=/home/nvidia/icon.png
<b style="color:#2c5c4e">Exec</b>=sh /home/nvidia/test4.sh
<b style="color:#2c5c4e">Path</b>=/home/nvidia/
<b style="color:#2c5c4e">Name</b>=posenet
<b style="color:#2c5c4e">StartupNotify</b>=<span style="color:#85278a">true</span></div>
<div class="abs" style="left:879px;top:182px;width:359px;height:18px;background:#ededea;border-top:1px solid #cfcfcb;border-left:1px solid #c9c9c5"></div>
<span class="t" style="left:920.50px;top:186px;font-size:10.3px;line-height:12px;color:#6f7374;transform:scaleX(1.1043);">.desktop</span>
<svg width="7" height="4" style="left:967px;top:189px" viewBox="0 0 7 4"><path d="M0 0H7L3.500 4Z" fill="#6f7374"/></svg>
<span class="t" style="left:985.00px;top:186px;font-size:10.3px;line-height:12px;color:#6f7374;transform:scaleX(1.0658);">Tab Width: 8</span>
<svg width="7" height="4" style="left:1050px;top:189px" viewBox="0 0 7 4"><path d="M0 0H7L3.500 4Z" fill="#6f7374"/></svg>
<span class="t" style="left:1096.50px;top:186px;font-size:10.3px;line-height:12px;color:#6f7374;transform:scaleX(1.0445);">Ln 6, Col 27</span>
<svg width="7" height="4" style="left:1180px;top:189px" viewBox="0 0 7 4"><path d="M0 0H7L3.500 4Z" fill="#6f7374"/></svg>
<span class="t" style="left:1208.50px;top:186px;font-size:10.3px;line-height:12px;color:#6f7374;transform:scaleX(0.9318);">INS</span>
<div class="abs" style="left:755.5px;top:224.5px;width:464.5px;height:258px;background:#fefefb;border-radius:6px 6px 0 0;box-shadow:0 0 0 1px rgba(20,30,20,.55)"></div>
<div class="abs" style="left:755.5px;top:224.5px;width:464.5px;height:31px;background:linear-gradient(#fafaf8,#ebebe8);border-radius:6px 6px 0 0;border-bottom:1px solid #bfbfbb"></div>
<div class="abs" style="left:759.5px;top:228.5px;width:22px;height:22.5px;border:1px solid #b7b7b2;border-bottom-color:#a6a6a1;background:linear-gradient(#efefec,#d9d9d6);border-radius:3px 0 0 3px"></div>
<div class="abs" style="left:781px;top:228.5px;width:22.5px;height:22.5px;border:1px solid #b7b7b2;border-bottom-color:#a6a6a1;background:linear-gradient(#efefec,#d9d9d6);border-radius:0 3px 3px 0"></div>
<svg width="7" height="9" style="left:767.5px;top:235.5px" viewBox="0 0 7 9"><path d="M5.500 1L1.500 4.500L5.500 8" stroke="#2e3436" stroke-width="1.700" fill="none"/></svg>
<svg width="7" height="9" style="left:789px;top:235.5px" viewBox="0 0 7 9"><path d="M1.500 1L5.500 4.500L1.500 8" stroke="#7a7e80" stroke-width="1.500" fill="none"/></svg>
<div class="abs" style="left:808px;top:228.5px;width:17.5px;height:22.5px;border:1px solid #b7b7b2;border-bottom-color:#a6a6a1;background:linear-gradient(#efefec,#d9d9d6);border-radius:3px 0 0 3px"></div>
<svg width="4" height="7" style="left:814.5px;top:236.5px" viewBox="0 0 4 7"><path d="M4 0V7L0 3.500Z" fill="#6a6e70"/></svg>
<div class="abs" style="left:825px;top:228.5px;width:60px;height:22.5px;border:1px solid #b4b4af;background:linear-gradient(#dededb,#d3d3d0);margin-left:-1px;width:61px"></div>
<svg width="11" height="10" style="left:831px;top:234.5px" viewBox="0 0 11 10"><path d="M0.800 5.300L5.500 1L10.200 5.300M2.300 4.500V9.200H4.500V6.500H6.500V9.200H8.700V4.500" stroke="#1c1f20" stroke-width="1.400" fill="none" stroke-linejoin="round"/></svg>
<span class="t" style="left:845.50px;top:235px;font-size:10.3px;line-height:12px;color:#1c1f20;font-weight:700;transform:scaleX(1.0836);">Home</span>
<div class="abs" style="left:884.5px;top:228.5px;width:63.5px;height:22.5px;border:1px solid #b7b7b2;border-bottom-color:#a6a6a1;background:linear-gradient(#efefec,#d9d9d6);"></div>
<span class="t" style="left:896.00px;top:235px;font-size:10.3px;line-height:12px;color:#3a3e40;transform:scaleX(1.0852);">Desktop</span>
<div class="abs" style="left:947px;top:228.5px;width:48.5px;height:22.5px;border:1px solid #b7b7b2;border-bottom-color:#a6a6a1;background:linear-gradient(#efefec,#d9d9d6);margin-left:-1px;width:49.500px"></div>
<span class="t" style="left:958.00px;top:235px;font-size:10.3px;line-height:12px;color:#3a3e40;transform:scaleX(1.1228);">client</span>
<div class="abs" style="left:994.5px;top:228.5px;width:17px;height:22.5px;border:1px solid #b7b7b2;border-bottom-color:#a6a6a1;background:linear-gradient(#efefec,#d9d9d6);border-radius:0 3px 3px 0"></div>
<svg width="4" height="7" style="left:1001.5px;top:236.5px" viewBox="0 0 4 7"><path d="M0 0V7L4 3.500Z" fill="#3a3e40"/></svg>
<div class="abs" style="left:1055.5px;top:228.5px;width:22.5px;height:22.5px;border:1px solid #b7b7b2;border-bottom-color:#a6a6a1;background:linear-gradient(#efefec,#d9d9d6);border-radius:3px"></div>
<svg width="11" height="11" style="left:1061px;top:234px" viewBox="0 0 11 11"><circle cx="4.300" cy="4.300" r="3.100" stroke="#1c1f20" stroke-width="1.500" fill="none"/><path d="M6.600 6.600L10 10" stroke="#1c1f20" stroke-width="1.800"/></svg>
<div class="abs" style="left:1082px;top:228.5px;width:22.5px;height:22.5px;border:1px solid #b7b7b2;border-bottom-color:#a6a6a1;background:linear-gradient(#efefec,#d9d9d6);border-radius:3px"></div>
<svg width="8" height="8" style="left:1089.500px;top:236px" viewBox="0 0 8 8"><path d="M0 0H3V3H0ZM5 0H8V3H5ZM0 5H3V8H0ZM5 5H8V8H5Z" fill="#1c1f20"/></svg>
<div class="abs" style="left:1108.5px;top:228.5px;width:22.5px;height:22.5px;border:1px solid #b7b7b2;border-bottom-color:#a6a6a1;background:linear-gradient(#efefec,#d9d9d6);border-radius:3px"></div>
<svg width="9" height="8" style="left:1115.500px;top:236px" viewBox="0 0 9 8"><path d="M0 1H9M0 4H9M0 7H9" stroke="#1c1f20" stroke-width="1.400"/></svg>
<div class="abs" style="left:1135.5px;top:230px;width:1px;height:20px;background:#d2d2ce"></div>
<svg width="65.54999999999995" height="12" style="left:1145.2px;top:234px" viewBox="1145.2 234 65.54999999999995 12"><rect x="1148.0" y="240.9" width="6.400" height="1.900" fill="#2e3436"/><rect x="1175.45" y="237.95" width="4.900" height="4.100" fill="none" stroke="#2e3436" stroke-width="1.500"/><path d="M1202.15 237.6L1207.35 242.4M1207.35 237.6L1202.15 242.4" stroke="#2e3436" stroke-width="1.700" fill="none"/></svg>
<div class="abs" style="left:755.5px;top:255.5px;width:118.5px;height:227px;background:#f4f4f1;border-right:1px solid #d0d0cc"></div>
<div class="abs" style="left:755.5px;top:284px;width:119px;height:24px;background:#3b86d6"></div>
<svg width="10" height="10" style="left:764.5px;top:264.5px" viewBox="0 0 10 10"><circle cx="5" cy="5" r="4.200" stroke="#2e3436" stroke-width="1.200" fill="none"/><path d="M5 5L6.800 2.800" stroke="#2e3436" stroke-width="1.100" fill="none"/></svg>
<span class="t" style="left:780.50px;top:265px;font-size:10.3px;line-height:12px;color:#2e3436;transform:scaleX(1.0263);">Recent</span>
<svg width="11" height="10" style="left:764px;top:291px" viewBox="0 0 11 10"><path d="M0.800 5.300L5.500 1L10.200 5.300M2.300 4.500V9.200H4.500V6.500H6.500V9.200H8.700V4.500" stroke="#fff" stroke-width="1.300" fill="none" stroke-linejoin="round"/></svg>
<span class="t" style="left:780.50px;top:291px;font-size:10.3px;line-height:12px;color:#ffffff;transform:scaleX(1.0375);">Home</span>
<svg width="12" height="10" style="left:763.5px;top:316.5px" viewBox="0 0 12 10"><path d="M0 0H4.500L5.500 1.500H12V10H0Z" fill="#2e3436"/></svg>
<svg width="9" height="11" style="left:765.5px;top:341px" viewBox="0 0 9 11"><path d="M0.700 0.700H5.500L8.300 3.500V10.300H0.700Z" stroke="#2e3436" stroke-width="1.400" fill="none"/></svg>
<svg width="9" height="11" style="left:765.5px;top:366px" viewBox="0 0 9 11"><path d="M4.500 0V9M1 5.800L4.500 9.500L8 5.800" stroke="#2e3436" stroke-width="1.500" fill="none"/></svg>
<svg width="11" height="11" style="left:764.5px;top:391.500px" viewBox="0 0 11 11"><path d="M3.500 8.500V1.500H9.500V7.500" stroke="#2e3436" stroke-width="1.300" fill="none"/><circle cx="2.300" cy="8.700" r="1.800" fill="#2e3436"/><circle cx="8.300" cy="7.700" r="1.800" fill="#2e3436"/></svg>
<svg width="11" height="9" style="left:764.5px;top:418px" viewBox="0 0 11 9"><path d="M0 1.500H3L4 0H7L8 1.500H11V9H0Z" fill="#2e3436"/><circle cx="5.500" cy="5" r="2" fill="#f4f4f1"/></svg>
<svg width="11" height="8" style="left:764.5px;top:444px" viewBox="0 0 11 8"><path d="M3 0H11V8H3ZM0 2L2.500 4L0 6Z" fill="#2e3436"/></svg>
<svg width="11" height="12" style="left:764.5px;top:467.500px" viewBox="0 0 11 12"><path d="M0 2.500H11M3.500 2V0.700H7.500V2M1.200 4V11.300H9.800V4M3.700 5V10M5.500 5V10M7.300 5V10" stroke="#2e3436" stroke-width="1.200" fill="none"/></svg>
<div class="abs" style="left:874.5px;top:255.5px;width:345.5px;height:17px;background:#fbfbf8;border-bottom:1px solid #deded9"></div>
<span class="t" style="left:879.60px;top:259px;font-size:10.3px;line-height:12px;color:#8b8e8f;font-weight:700;transform:scaleX(1.0928);">Name</span>
<div class="abs" style="left:1087.5px;top:256px;width:1px;height:16px;background:#e2e2de"></div>
<span class="t" style="left:1092.25px;top:258px;font-size:10.3px;line-height:12px;color:#8b8e8f;font-weight:700;transform:scaleX(1.0893);">Size</span>
<div class="abs" style="left:1145.5px;top:256px;width:1px;height:16px;background:#e2e2de"></div>
<span class="t" style="left:1150.60px;top:258px;font-size:10.3px;line-height:12px;color:#8b8e8f;font-weight:700;transform:scaleX(1.1033);">Modified</span>
<svg width="6" height="4" style="left:1207.600px;top:262.200px" viewBox="0 0 6 4"><path d="M0 4H6L3 0Z" fill="#8b8e8f"/></svg>
<div class="abs" style="left:875px;top:272px;width:345px;height:4px;overflow:hidden">
<div class="abs" style="left:13.500px;top:-9px;width:14.500px;height:18px;border:1px solid #cfcfca;background:#fbfbf8;border-radius:1px"></div>
<span class="t" style="left:34.60px;top:-5px;font-size:10.3px;line-height:12px;color:#2e3436;transform:scaleX(1.0152);">Music</span>
<span class="t" style="left:218.00px;top:-5px;font-size:10.3px;line-height:12px;color:#7a7e80;transform:scaleX(1.0782);">0 items</span>
<span class="t" style="left:288.20px;top:-5px;font-size:10.3px;line-height:12px;color:#7a7e80;transform:scaleX(1.1079);">1 5Л 2020</span>
</div>
<div class="abs" style="left:875px;top:273px;width:345px;height:1px;background:repeating-linear-gradient(90deg,#d4d4d0 0 4px,transparent 4px 7px)"></div>
<div class="abs" style="left:875px;top:286.5px;width:345px;height:1px;background:#ecece8"></div>
<div class="abs" style="left:889px;top:293px;width:14px;height:17px;border:1px solid #cfcfca;background:#fbfbf8;border-radius:1px"></div>
<span class="t" style="left:909.40px;top:297px;font-size:10.3px;line-height:12px;color:#2e3436;transform:scaleX(1.0981);">test3.sh</span>
<span class="t" style="left:1093.10px;top:297px;font-size:10.3px;line-height:12px;color:#7a7e80;transform:scaleX(1.0684);">49 bytes</span>
<span class="t" style="left:1189.20px;top:297px;font-size:10.3px;line-height:12px;color:#7a7e80;transform:scaleX(1.0046);">07:43</span>
<div class="abs" style="left:778.5px;top:309.5px;width:502px;height:388px;background:#fefefb;border-radius:6px 6px 0 0;box-shadow:0 0 0 1px rgba(20,30,20,.5)"></div>
<div class="abs" style="left:778.5px;top:309.5px;width:502px;height:24px;background:linear-gradient(#f3f3f1,#ebebe8);border-radius:6px 6px 0 0;border-bottom:1px solid #c2c2be"></div>
<span class="t" style="left:958.10px;top:316px;font-size:10.3px;line-height:12px;color:#25282a;font-weight:700;transform:scaleX(1.1195);">emacs25@nvidia-desktop</span>
<svg width="57.5" height="12" style="left:1216.5px;top:315.5px" viewBox="1216.5 315.5 57.5 12"><rect x="1219.3" y="322.4" width="6.400" height="1.900" fill="#25282a"/><rect x="1243.05" y="319.45" width="4.900" height="4.100" fill="none" stroke="#25282a" stroke-width="1.500"/><path d="M1265.4 319.1L1270.6 323.9M1270.6 319.1L1265.4 323.9" stroke="#25282a" stroke-width="1.700" fill="none"/></svg>
<div class="abs" style="left:778.5px;top:333.5px;width:502px;height:17.5px;background:#ecece9"></div>
<span class="t" style="left:784.20px;top:338px;font-size:10.3px;line-height:12px;color:#1c1f20;transform:scaleX(0.9522);">File</span>
<span class="t" style="left:811.00px;top:338px;font-size:10.3px;line-height:12px;color:#1c1f20;transform:scaleX(1.0254);">Edit</span>
<span class="t" style="left:840.30px;top:338px;font-size:10.3px;line-height:12px;color:#1c1f20;transform:scaleX(1.0394);">Options</span>
<span class="t" style="left:889.00px;top:338px;font-size:10.3px;line-height:12px;color:#1c1f20;transform:scaleX(1.0389);">Buffers</span>
<span class="t" style="left:934.20px;top:338px;font-size:10.3px;line-height:12px;color:#1c1f20;transform:scaleX(0.9856);">Tools</span>
<span class="t" style="left:970.00px;top:338px;font-size:10.3px;line-height:12px;color:#1c1f20;transform:scaleX(0.9892);">Sh-Script</span>
<span class="t" style="left:1023.75px;top:338px;font-size:10.3px;line-height:12px;color:#1c1f20;transform:scaleX(1.0313);">Help</span>
<div class="abs" style="left:778.5px;top:351px;width:502px;height:27px;background:#ecece9"></div>
<svg width="14.500" height="15.500" style="left:788px;top:357.500px" viewBox="0 0 16 18"><path d="M1 1H10L15 6V17H1Z" fill="#fdfdfb" stroke="#3a3e40" stroke-width="1.200"/><path d="M10 1V6H15" fill="#e4e4e0" stroke="#3a3e40" stroke-width="1"/></svg>
<svg width="18" height="14" style="left:814px;top:358.500px" viewBox="0 0 18 14"><path d="M1 13V1.500H6L7.500 3.500H14V6" fill="#c9cc9a" stroke="#4a4e38" stroke-width="1.200"/><path d="M1 13L4 6H17.200L14 13Z" fill="#e4e6b8" stroke="#4a4e38" stroke-width="1.200" stroke-linejoin="round"/></svg>
<svg width="14" height="15" style="left:844px;top:358px" viewBox="0 0 14 15"><rect x="0.600" y="0.600" width="12.800" height="13.800" rx="1" fill="#d9d9d5" stroke="#a9aaa6" stroke-width="1.200"/><rect x="3" y="1.500" width="8" height="5" fill="#f4f4f2" stroke="#a9aaa6" stroke-width=".8"/><rect x="3.500" y="9" width="7" height="5" fill="#bdbeba"/></svg>
<svg width="9" height="9" style="left:874.500px;top:361px" viewBox="0 0 9 9"><path d="M1 1L8 8M8 1L1 8" stroke="#1a1a1a" stroke-width="1.800" fill="none"/></svg>
<svg width="15" height="15" style="left:900px;top:358px" viewBox="0 0 15 15"><rect x="0.600" y="0.600" width="13.800" height="13.800" rx="1" fill="#e0e0dd" stroke="#9a9b97" stroke-width="1.200"/><rect x="3" y="1.500" width="9" height="5.500" fill="#f8f8f6" stroke="#a9aaa6" stroke-width=".8"/><rect x="3.500" y="9.500" width="8" height="5" fill="#b4b5b1"/><rect x="5" y="10.500" width="2" height="3" fill="#eee"/></svg>
<span class="t" style="left:915.70px;top:360px;font-size:10.3px;line-height:12px;color:#888b8c;transform:scaleX(0.9921);">Save</span>
<div class="abs" style="left:949.5px;top:355px;width:1px;height:21px;background:#d6d6d2"></div>
<svg width="12" height="13" style="left:962px;top:358.500px" viewBox="0 0 12 13"><path d="M5 1L1.200 4.800L5 8.500V6C9 6 9.500 9 7 12C11.500 9.500 11 3.500 5 3.500Z" fill="#d8c06a" stroke="#8a7a3a" stroke-width="1" stroke-linejoin="round"/></svg>
<span class="t" style="left:976.90px;top:360px;font-size:10.3px;line-height:12px;color:#888b8c;transform:scaleX(1.0112);">Undo</span>
<div class="abs" style="left:1012px;top:355px;width:1px;height:21px;background:#d6d6d2"></div>
<svg width="12" height="16" style="left:1025px;top:357px" viewBox="0 0 12 16"><path d="M2.500 0.500L8 10M9.500 0.500L4 10" stroke="#4a4e50" stroke-width="1.300" fill="none"/><circle cx="3" cy="12.500" r="2.300" stroke="#3a3e40" stroke-width="1.300" fill="none"/><circle cx="9" cy="12.500" r="2.300" stroke="#3a3e40" stroke-width="1.300" fill="none"/></svg>
<svg width="16" height="15" style="left:1050.500px;top:358px" viewBox="0 0 16 15"><rect x="0.600" y="0.600" width="9" height="10" fill="#f1f1ee" stroke="#85868a" stroke-width="1.100"/><rect x="6" y="4" width="9.400" height="10.400" fill="#f1f1ee" stroke="#85868a" stroke-width="1.100"/><path d="M8 7H13.500M8 9H13.500M8 11H13.500" stroke="#c4c5c1" stroke-width=".8"/></svg>
<svg width="16" height="17" style="left:1078px;top:356.500px" viewBox="0 0 16 17"><rect x="0.700" y="2" width="12" height="14" rx="1" fill="#5c5e50" stroke="#33352b" stroke-width="1.100"/><rect x="4" y="0.600" width="5.500" height="3" fill="#b9bab6" stroke="#4a4e50" stroke-width=".9"/><rect x="6.500" y="6.500" width="8.800" height="9.800" fill="#f4f4f1" stroke="#7a7b77" stroke-width="1"/><path d="M8.500 9.500H13.500M8.500 11.500H13.500M8.500 13.500H13.500" stroke="#b4b5b1" stroke-width=".8"/></svg>
<div class="abs" style="left:1105.5px;top:355px;width:1px;height:21px;background:#d6d6d2"></div>
<svg width="16" height="16" style="left:1116.500px;top:357.500px" viewBox="0 0 16 16"><circle cx="6.300" cy="6.300" r="4.600" stroke="#20262c" stroke-width="2.300" fill="#dfe7ee"/><path d="M9.800 9.800L14.200 14.200" stroke="#20262c" stroke-width="3" stroke-linecap="round"/></svg>
<svg width="13" height="11" style="left:956.500px;top:341.500px" viewBox="-0.5 -0.5 13 11"><path d="M1.800 3.600Q2.200 1.200 4.200 0.900Q6 0 8 1.200Q10.600 1.900 10.900 4.200V8Q10.900 8.900 10 8.900H2.600Q1.100 8.900 0.800 7Q0.200 5 1.800 3.600Z" fill="#fdfdfc" stroke="#333638" stroke-width="1"/></svg>
<div class="abs" style="left:778.5px;top:378px;width:494.5px;height:192px;background:#fefefb"></div>
<div class="mono big" style="left:784px;top:379px;color:#1a1a1a"><span style="color:#6a4a72">#!/bin/sh</span>
cd Desktop/client
posenet /dev/video1</div>
<div class="abs" style="left:1264px;top:378px;width:5px;height:193px;background:linear-gradient(90deg,#fefefb,#eef0ec)"></div>
<div class="abs" style="left:1269px;top:378px;width:11px;height:193px;background:#d6d8d4;border-left:1px solid #c3c6c1"></div>
<div class="abs" style="left:1273px;top:381px;width:4px;height:170px;background:#555a55;border-radius:2px"></div>
<div class="abs" style="left:778.5px;top:571px;width:502px;height:12px;background:#b8b8b8;border-top:1px solid #8f8f8f;border-bottom:1px solid #8a8a8a"></div>
<div class="mono big" style="left:785.4px;top:571px;color:#111">-:---  <b>test4.sh</b>       All L1     (Shell-script[sh])</div>
<div class="abs" style="left:1264px;top:583px;width:5px;height:114px;background:linear-gradient(90deg,#fefefb,#eef0ec)"></div>
<div class="abs" style="left:1269px;top:583px;width:11px;height:114px;background:#d6d8d4;border-left:1px solid #c3c6c1"></div>
<div class="abs" style="left:1273px;top:586px;width:4px;height:73px;background:#555a55;border-radius:2px"></div>
<span class="t" style="left:784.00px;top:583px;font-size:10.3px;line-height:12px;color:#4c1f2c;transform:scaleX(1.0693);">Welcome to </span>
<span class="t" style="left:846.50px;top:583px;font-size:10.3px;line-height:12px;color:#3f4f72;transform:scaleX(1.0137);text-decoration:underline">GNU Emacs</span>
<span class="t" style="left:904.50px;top:583px;font-size:10.3px;line-height:12px;color:#4c1f2c;transform:scaleX(1.1136);">, one component of the </span>
<span class="t" style="left:1027.00px;top:583px;font-size:10.3px;line-height:12px;color:#3f4f72;transform:scaleX(1.0624);text-decoration:underline">GNU/Linux</span>
<span class="t" style="left:1080.50px;top:583px;font-size:10.3px;line-height:12px;color:#4c1f2c;transform:scaleX(1.1350);"> operating system.</span>
<span class="t" style="left:784.00px;top:607px;font-size:10.3px;line-height:12px;color:#3f4f72;transform:scaleX(1.0865);text-decoration:underline">Emacs Tutorial</span>
<span class="t" style="left:930.50px;top:607px;font-size:10.3px;line-height:12px;color:#111;transform:scaleX(1.1018);">Learn basic keystroke commands</span>
<span class="t" style="left:784.00px;top:619px;font-size:10.3px;line-height:12px;color:#3f4f72;transform:scaleX(1.0914);text-decoration:underline">Emacs Guided Tour</span>
<span class="t" style="left:930.50px;top:619px;font-size:10.3px;line-height:12px;color:#111;transform:scaleX(1.1011);">Overview of Emacs features at gnu.org</span>
<span class="t" style="left:784.00px;top:631px;font-size:10.3px;line-height:12px;color:#3f4f72;transform:scaleX(1.0686);text-decoration:underline">View Emacs Manual</span>
<span class="t" style="left:930.50px;top:631px;font-size:10.3px;line-height:12px;color:#111;transform:scaleX(1.1027);">View the Emacs manual using Info</span>
<span class="t" style="left:784.00px;top:643px;font-size:10.3px;line-height:12px;color:#3f4f72;transform:scaleX(1.0964);text-decoration:underline">Absence of Warranty</span>
<span class="t" style="left:784.00px;top:655px;font-size:10.3px;line-height:12px;color:#3f4f72;transform:scaleX(1.0919);text-decoration:underline">Copying Conditions</span>
<span class="t" style="left:930.50px;top:655px;font-size:10.3px;line-height:12px;color:#111;transform:scaleX(1.1187);">Conditions for redistributing and changing Emacs</span>
<span class="t" style="left:784.00px;top:667px;font-size:10.3px;line-height:12px;color:#3f4f72;transform:scaleX(1.0935);text-decoration:underline">Ordering Manuals</span>
<span class="t" style="left:930.50px;top:667px;font-size:10.3px;line-height:12px;color:#111;transform:scaleX(1.1094);">Purchasing printed copies of manuals</span>
<span class="t" style="left:930.50px;top:643px;font-size:10.3px;line-height:12px;color:#111;transform:scaleX(1.0617);">GNU Emacs comes with </span>
<span class="t" style="left:1053.00px;top:643px;font-size:10.3px;line-height:12px;color:#111;font-style:italic;transform:scaleX(0.9739);">ABSOLUTELY NO WARRANTY</span>
<span class="t" style="left:784.00px;top:679px;font-size:10.3px;line-height:12px;color:#111;transform:scaleX(1.1403);">To quit a partially entered command, type </span>
<span class="mono big" style="left:1002.5px;top:678px;color:#111">Control-g</span>
<span class="t" style="left:1056.50px;top:679px;font-size:10.3px;line-height:12px;color:#111;transform:scaleX(0.8696);">.</span>
<div class="abs" style="left:784px;top:606.5px;width:6px;height:12px;border:1px solid #333"></div>
<div class="abs" style="left:0px;top:0px;width:1280px;height:18px;background:linear-gradient(#ebebe8,#e4e4e1);border-bottom:1px solid #f8f8f6"></div>
<span class="t" style="left:5.50px;top:3px;font-size:10.3px;line-height:12px;color:#1a1c1d;transform:scaleX(1.0625);">Applications</span>
<span class="t" style="left:79.50px;top:3px;font-size:10.3px;line-height:12px;color:#1a1c1d;transform:scaleX(0.9869);">Places</span>
<span class="t" style="left:127.00px;top:3px;font-size:10.3px;line-height:12px;color:#1a1c1d;transform:scaleX(1.0094);">GNU Emacs 25 (GUI)</span>
<svg width="9" height="8" style="left:1168.500px;top:5px" viewBox="0 0 9 8"><path d="M1 1.200H8M0 7H9" stroke="#1a1c1d" stroke-width="1.100"/></svg>
<span class="t" style="left:1181.50px;top:3px;font-size:10.3px;line-height:12px;color:#1a1c1d;transform:scaleX(1.0394);">08:11</span>
<span class="t" style="left:1224.50px;top:3px;font-size:9.36px;line-height:12px;color:#1a1c1d;font-weight:700;transform:scaleX(0.9617);">?</span>
<svg width="13" height="12" style="left:1240px;top:3px" viewBox="0 0 13 12"><path d="M0.500 3.500H2.500L5.500 0.800V10.200L2.500 7.500H0.500Z" fill="#1a1c1d"/><path d="M7.500 2C8.500 3.500 8.500 7 7.500 9" stroke="#9a9c9b" stroke-width="1.200" fill="none"/><path d="M8 8L11.500 11.500M11.500 8L8 11.500" stroke="#1a1c1d" stroke-width="1.300"/></svg>
<svg width="12" height="12" style="left:1259px;top:2.500px" viewBox="0 0 12 12"><path d="M3.700 2.600A4.600 4.600 0 1 0 8.300 2.600" stroke="#1a1c1d" stroke-width="1.500" fill="none"/><path d="M6 0.500V5.500" stroke="#1a1c1d" stroke-width="1.500"/></svg>
<div class="abs" style="left:0px;top:697.5px;width:1280px;height:22.5px;background:linear-gradient(#ebebe8,#e0e0dd);border-top:1px solid #f6f6f4"></div>
<div class="abs" style="left:0px;top:719px;width:1236px;height:1px;background:#1a1a1a"></div>
<div class="abs" style="left:0px;top:699px;width:174.5px;height:19.5px;background:linear-gradient(#efefec,#e2e2df);border:1px solid #8f8f8b;border-top-color:#c9c9c5;border-bottom-color:#a9a9a5;border-radius:2px"></div>
<div class="abs" style="left:176.5px;top:699px;width:175.0px;height:19.5px;background:linear-gradient(#efefec,#e2e2df);border:1px solid #8f8f8b;border-top-color:#c9c9c5;border-bottom-color:#a9a9a5;border-radius:2px"></div>
<div class="abs" style="left:353px;top:699px;width:176.5px;height:19.5px;background:linear-gradient(#efefec,#e2e2df);border:1px solid #8f8f8b;border-top-color:#c9c9c5;border-bottom-color:#a9a9a5;border-radius:2px"></div>
<div class="abs" style="left:531.5px;top:699px;width:174.5px;height:19.5px;background:linear-gradient(#efefec,#e2e2df);border:1px solid #8f8f8b;border-top-color:#c9c9c5;border-bottom-color:#a9a9a5;border-radius:2px"></div>
<div class="abs" style="left:709px;top:699px;width:175px;height:19.5px;background:linear-gradient(#d2d2cf,#d9d9d6);border:1px solid #8f8f8b;border-top-color:#c9c9c5;border-bottom-color:#a9a9a5;border-radius:2px"></div>
<svg width="13" height="13" style="left:6px;top:702.5px" viewBox="0 0 13 13"><circle cx="6.500" cy="6.500" r="6" fill="#c4d4e6"/><circle cx="6.500" cy="6.500" r="3.300" fill="#e9eef4"/><circle cx="6.500" cy="6.500" r="2.300" fill="#a9c1dc"/></svg>
<span class="t" style="left:24.50px;top:704px;font-size:10.3px;line-height:12px;color:#8b8e8f;transform:scaleX(0.9646);">[Desktop icon to run python3 p...</span>
<svg width="14" height="14" style="left:182px;top:702px" viewBox="0 0 14 14"><path d="M7 0.500L13.500 7L7 13.500L0.500 7Z" fill="#6a5a9a" stroke="#3a2f5a" stroke-width=".8"/><path d="M5 9.500L8.500 4" stroke="#e8e4f4" stroke-width="1.300"/></svg>
<span class="t" style="left:201.00px;top:704px;font-size:10.3px;line-height:12px;color:#1a1c1d;transform:scaleX(0.9587);">nvidia@nvidia-desktop: /usr/loc...</span>
<svg width="12" height="14" style="left:361px;top:702px" viewBox="0 0 12 14"><rect x="0.500" y="0.500" width="11" height="13" rx="1.500" fill="#3f6faf" stroke="#274a7a" stroke-width="1"/><rect x="2.500" y="3" width="7" height="2" fill="#c9dcf2"/><rect x="2.500" y="6.500" width="7" height="2" fill="#c9dcf2"/><rect x="2.500" y="10" width="7" height="1.500" fill="#9abde6"/></svg>
<span class="t" style="left:378.00px;top:704px;font-size:10.3px;line-height:12px;color:#1a1c1d;transform:scaleX(0.9465);">Home</span>
<svg width="14" height="14" style="left:537.500px;top:702px" viewBox="0 0 14 14"><rect x="1" y="1.500" width="10" height="12" fill="#f6f5ee" stroke="#8a8a80" stroke-width="1"/><path d="M3 5H9M3 7.500H8M3 10H7" stroke="#b4b4aa" stroke-width=".8"/><path d="M5.500 10.500L6.500 7.500L12 1L13.500 2.500L8 9Z" fill="#d9762a" stroke="#7a3a10" stroke-width=".7"/></svg>
<span class="t" style="left:555.50px;top:704px;font-size:10.3px;line-height:12px;color:#1a1c1d;transform:scaleX(0.9765);">test.desktop (~/Desktop) - gedit</span>
<svg width="14" height="14" style="left:713px;top:702px" viewBox="0 0 14 14"><circle cx="7" cy="7" r="6.500" fill="#6b4aa0" stroke="#3f2a6a" stroke-width=".8"/><path d="M9.500 3.500H5L8 6.500L4.500 10.500H9.800" stroke="#fff" stroke-width="1.300" fill="none"/></svg>
<span class="t" style="left:732.50px;top:704px;font-size:10.3px;line-height:12px;color:#1a1c1d;transform:scaleX(0.9482);">emacs25@nvidia-desktop</span>
<div class="abs" style="left:1244px;top:700px;width:34px;height:17.5px;background:#e4e4e1;border:1px solid #c6c6c2"></div>
<span class="t" style="left:1250.30px;top:704px;font-size:10.3px;line-height:12px;color:#1a1c1d;font-weight:700;transform:scaleX(1.0725);">1 / 4</span>
</body>
</html>
